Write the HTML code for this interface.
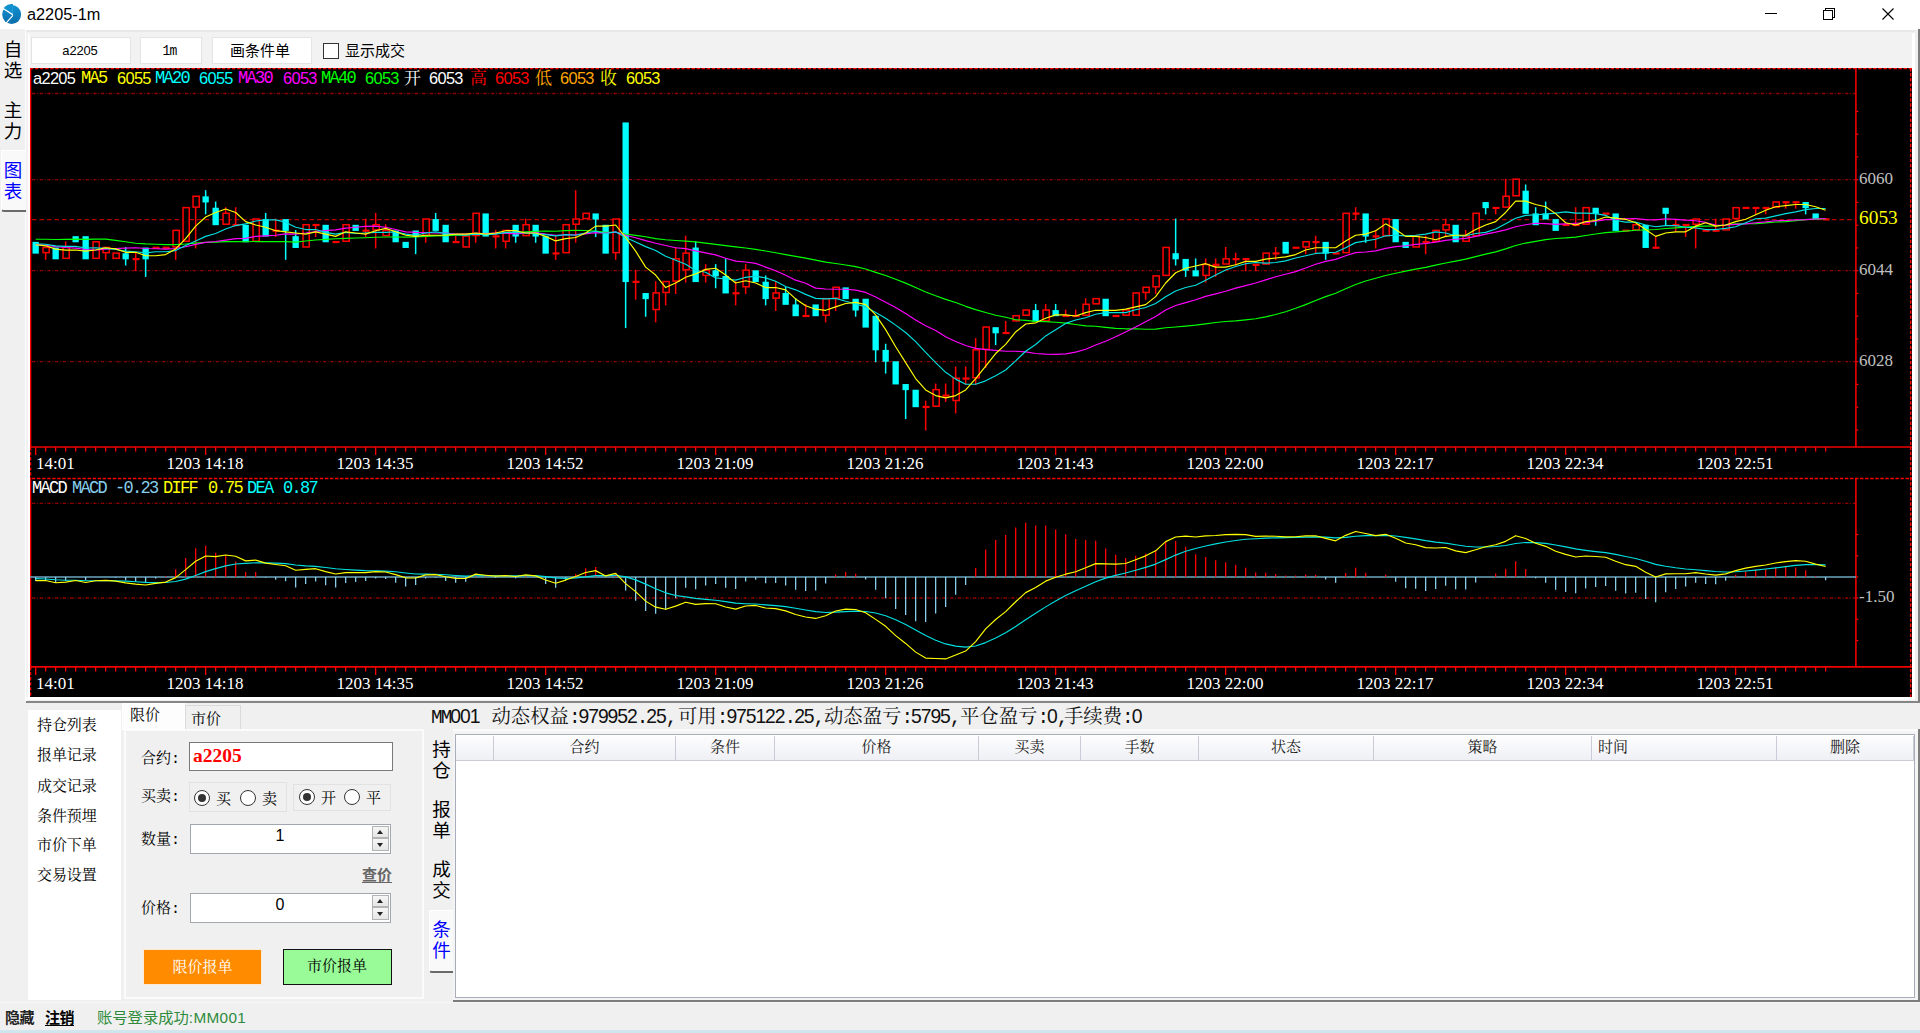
<!DOCTYPE html>
<html lang="zh-CN">
<head>
<meta charset="utf-8">
<title>a2205-1m</title>
<style>
*{box-sizing:border-box;margin:0;padding:0}
html,body{width:1920px;height:1033px;overflow:hidden;background:#f0f0f0}
body{position:relative;font-family:"Liberation Sans","Noto Sans CJK SC",sans-serif;font-size:15px;color:#000}
.abs{position:absolute}
.song{font-family:"Liberation Mono","Noto Serif CJK SC",serif}
.cj{font-family:"Liberation Sans","Noto Sans CJK SC",sans-serif}
/* title bar */
#title{left:0;top:0;width:1920px;height:30px;background:#fff}
#title .t{left:27px;top:4.2px;font-size:16.3px;line-height:20px;color:#000;letter-spacing:0}
/* frame */
#frameline{left:26.3px;top:29.9px;width:1894px;height:2.5px;background:#e8e8e8}
#panel{left:26.3px;top:32.4px;width:1886px;height:666px;background:#f2f2f2}
#lstrip{left:27.6px;top:34px;width:2.7px;height:665px;background:#fdfdfd}
#sbtop{left:0;top:28.9px;width:25px;height:2px;background:#f0f0f0}
#pwhite{left:1912px;top:33px;width:3px;height:667px;background:#fff}
#plight{left:1915px;top:30px;width:3px;height:671px;background:#efefef}
#pwhiteb{left:26px;top:697px;width:1889px;height:3px;background:linear-gradient(#fff 0,#fff 80%,#f0f0f0)}
#pshadow{left:26px;top:700.5px;width:1894px;height:2px;background:#868686}
#rborder{left:1917.6px;top:29px;width:2.4px;height:673px;background:#7d7d7d}
#rborder2{left:1917.6px;top:729px;width:2.4px;height:273px;background:#7d7d7d}
/* left vertical tabs */
.vtab{left:0;width:26px;height:60px;text-align:center;font-size:18.5px;line-height:21.4px;color:#000}
.vtab.sel{color:#0000ff}
#vsel{left:1px;top:150px;width:25px;height:62px;background:#f9f9f9;border-left:1px solid #fff;border-top:1px solid #fff;border-bottom:2px solid #6a6a6a;border-radius:0 0 0 3px}
/* toolbar */
.tbtn{top:36.6px;height:27.4px;background:#fff;border:1px solid #e4e4e4;text-align:center;line-height:25px}
/* chart text */
.lg{top:68.7px;font-size:17px;line-height:20px;white-space:pre;letter-spacing:-1.7px;font-family:"Liberation Mono","Noto Serif CJK SC",monospace}
.lgc{letter-spacing:0;margin-top:1.5px}
.lgm{transform:scaleY(1.1);transform-origin:0 14.6px}
.lgd{font-family:"Liberation Sans",sans-serif;font-size:16.4px;letter-spacing:-.67px;margin-top:-1.2px}
.tm{font-family:"Liberation Serif",serif;font-size:17px;line-height:20px;color:#fff;white-space:pre;text-align:center;width:120px}
.pl{font-family:"Liberation Serif",serif;font-size:17px;line-height:20px;color:#c0c0c0;left:1859px}
/* bottom-left list */
#list{left:28px;top:710px;width:93px;height:290px;background:#fff}
#list div{position:absolute;left:9px;font-size:15px;line-height:20px;letter-spacing:-.1px}
/* tab control */
#tabsel{left:122px;top:703px;width:63px;height:27px;background:#fdfdfd;border:1px solid #fff}
#tabun{left:185px;top:705.2px;width:56px;height:23.4px;background:#f0f0f0;border:1px solid #dadada;border-bottom:none}
#pane{left:124px;top:729px;width:300px;height:270px;background:#f0f0f0;border:2px solid #fbfbfb}
.lab{font-size:15px;line-height:20px}
.inp{background:#fff;border:1px solid #7a7a7a}
.gb{border:1px solid #e2e2e2;background:#f0f0f0}
.radio{width:16px;height:16px;border-radius:50%;border:1px solid #333;background:#fff}
.radio.on::after{content:"";position:absolute;left:3px;top:3px;width:8px;height:8px;border-radius:50%;background:#333}
.spin{width:17px;height:12.2px;background:linear-gradient(#f6f6f6,#e6e6e6);border:1px solid #b4b4b4}
.spin i{position:absolute;left:4px;width:0;height:0;border-left:3.5px solid transparent;border-right:3.5px solid transparent}
.spin.up i{top:2.6px;border-bottom:4px solid #222}
.spin.dn i{top:3.2px;border-top:4px solid #222}
/* right panel */
.acct{top:704.2px;font-size:19.35px;line-height:24px;white-space:pre;font-family:"Liberation Mono","Noto Serif CJK SC",monospace;color:#111}
.acct b{font-weight:normal;letter-spacing:-1.93px}
.acct u{text-decoration:none;font-family:"Liberation Sans",sans-serif;letter-spacing:-1.08px}
.vt2{left:429px;width:25px;text-align:center;font-size:18.5px;line-height:21.4px;color:#000}
#vsel2{left:429px;top:910px;width:25px;height:63px;background:#f9f9f9;border-left:1px solid #fff;border-top:1px solid #fff;border-bottom:2px solid #6a6a6a;border-radius:0 0 0 3px}
#table{left:455px;top:734px;width:1460px;height:263.5px;background:#fff;border:1.3px solid #a9adb9}
#tsh-b{left:453px;top:1000px;width:1467px;height:2.4px;background:#7d7d7d}
#tfr-t{left:453px;top:729px;width:1465px;height:1.5px;background:#fbfbfb}
#tfr-in{left:453px;top:730.5px;width:1464.6px;height:269.5px;background:#f4f4f4}

.th{top:1px;height:25px;border-right:1px solid #c9ccd6;border-bottom:1px solid #c9ccd6;background:linear-gradient(#fdfdfe,#eff0f5);text-align:center;font-size:15px;line-height:25px;color:#1a1a1a}
/* status */
#status{left:0;top:1002px;width:1920px;height:28px;background:#f0f0f0;border-top:1px solid #f7f7f7}
#strip{left:0;top:1030px;width:1920px;height:3px;background:#cfe6ee}
</style>
</head>
<body>
<!-- title bar -->
<div id="title" class="abs">
  <svg class="abs" style="left:0;top:0" width="26" height="30" viewBox="0 0 26 30">
    <defs><linearGradient id="lg1" x1="0" y1="0" x2="0" y2="1"><stop offset="0" stop-color="#1292d2"/><stop offset="1" stop-color="#0b6dab"/></linearGradient>
    <clipPath id="cw"><path d="M12.9 14.1 L1.5 6.65 L1.5 0 L12.95 0Z"/></clipPath></defs>
    <circle cx="11.65" cy="14.55" r="9.45" fill="url(#lg1)"/>
    <path d="M12.8 15.5 L2.1 8.5 L1 8.2 L1 2 L12.95 2 L12.95 15.5Z" fill="#fff"/>
    <circle cx="11.45" cy="13.35" r="9.45" fill="#1190cf" clip-path="url(#cw)"/>
    <path d="M12.9 15.4 L6.3 22.8" stroke="#fff" stroke-width="1.15"/>
  </svg>
  <div class="abs t">a2205-1m</div>
  <svg class="abs" style="left:1750px;top:0" width="170" height="30" viewBox="0 0 170 30" shape-rendering="crispEdges">
    <rect x="15" y="13" width="12" height="1" fill="#000"/>
    <g fill="none" stroke="#000" stroke-width="1">
      <rect x="73.5" y="10.5" width="9" height="9"/>
      <path d="M75.5 10.5 V8.5 H84.5 V17.5 H82.5"/>
    </g>
    <g stroke="#000" stroke-width="1.1" shape-rendering="auto"><path d="M132.5 8.5 L143.5 19.5 M143.5 8.5 L132.5 19.5"/></g>
  </svg>
</div>
<div id="frameline" class="abs"></div>
<div id="panel" class="abs"></div>
<div id="lstrip" class="abs"></div>
<div id="sbtop" class="abs"></div>
<div id="pwhite" class="abs"></div>
<div class="abs" style="left:24.6px;top:29px;width:1.5px;height:121px;background:#fcfcfc"></div>
<div class="abs" style="left:24.6px;top:213px;width:1.5px;height:488px;background:#fcfcfc"></div>
<div id="pwhiteb" class="abs"></div>
<div id="pshadow" class="abs"></div>
<div id="plight" class="abs"></div>
<div id="rborder" class="abs"></div>

<!-- left vertical tabs -->
<div id="vsel" class="abs"></div>
<div class="abs vtab cj" style="top:39px">自<br>选</div>
<div class="abs vtab cj" style="top:100px">主<br>力</div>
<div class="abs vtab cj sel" style="top:160px">图<br>表</div>

<!-- toolbar -->
<div class="abs tbtn" style="left:31px;width:100px;font-size:13px;letter-spacing:-.15px;padding-right:2px;font-family:'Liberation Sans',sans-serif">a2205</div>
<div class="abs tbtn song" style="left:140px;width:62px;font-size:13px;letter-spacing:-.9px;padding-right:3px"><span style="display:inline-block;transform:scaleY(1.15)">1m</span></div>
<div class="abs tbtn cj" style="left:212px;width:100px;font-size:15px;padding-right:4px">画条件单</div>
<div class="abs" style="left:323px;top:43px;width:16px;height:16px;border:1px solid #333;background:#fff"></div>
<div class="abs cj" style="left:345px;top:40px;font-size:15px;line-height:22px">显示成交</div>

<!-- chart -->
<div class="abs" style="left:30px;top:68px;width:1882px;height:629px;background:#000">
<svg id="chart" width="1882" height="629" viewBox="30 68 1882 629">
<rect x="30" y="68" width="1882" height="629" fill="#000"/>
<line x1="32" x2="1855" y1="93.5" y2="93.5" stroke="#8e0000" stroke-width="1.3" stroke-dasharray="3.4 1.7 0.85 1.7"/>
<line x1="32" x2="1855" y1="179.7" y2="179.7" stroke="#8e0000" stroke-width="1.3" stroke-dasharray="3.4 1.7 0.85 1.7"/>
<line x1="32" x2="1855" y1="270.7" y2="270.7" stroke="#8e0000" stroke-width="1.3" stroke-dasharray="3.4 1.7 0.85 1.7"/>
<line x1="32" x2="1855" y1="361.7" y2="361.7" stroke="#8e0000" stroke-width="1.3" stroke-dasharray="3.4 1.7 0.85 1.7"/>
<line x1="32" x2="1855" y1="219.6" y2="219.6" stroke="#b40000" stroke-width="1.3" stroke-dasharray="4.6 2.9"/>
<line x1="32" x2="1855" y1="503.3" y2="503.3" stroke="#8e0000" stroke-width="1.3" stroke-dasharray="3.4 1.7 0.85 1.7"/>
<line x1="32" x2="1855" y1="598" y2="598" stroke="#8e0000" stroke-width="1.3" stroke-dasharray="3.4 1.7 0.85 1.7"/>
<line x1="30" x2="1912" y1="68.5" y2="68.5" stroke="#ff0000" stroke-width="1.5" stroke-dasharray="3.4 1.65"/>
<line x1="32" x2="1912" y1="478.4" y2="478.4" stroke="#ff0000" stroke-width="1.5" stroke-dasharray="3.4 1.65"/>
<line x1="1910.7" x2="1910.7" y1="68" y2="697" stroke="#ff0000" stroke-width="1.5" stroke-dasharray="3.4 1.65"/>
<line x1="30.6" x2="30.6" y1="68" y2="447" stroke="#ff0000" stroke-width="1.4"/>
<line x1="30.6" x2="30.6" y1="447" y2="478" stroke="#ff0000" stroke-width="1.4" stroke-dasharray="3.4 1.65"/>
<line x1="30.6" x2="30.6" y1="478" y2="667" stroke="#ff0000" stroke-width="1.4"/>
<line x1="30.6" x2="30.6" y1="667" y2="697" stroke="#ff0000" stroke-width="1.4" stroke-dasharray="3.4 1.65"/>
<line x1="30" x2="1912" y1="447" y2="447" stroke="#f00000" stroke-width="1.7"/>
<line x1="30" x2="1912" y1="666.9" y2="666.9" stroke="#f00000" stroke-width="1.7"/>
<line x1="1855.9" x2="1855.9" y1="68" y2="447" stroke="#ff0000" stroke-width="1.5"/>
<line x1="1855.9" x2="1855.9" y1="478" y2="667" stroke="#ff0000" stroke-width="1.5"/>
<line x1="1856.3" x2="1858.3" y1="111.4" y2="111.4" stroke="#ff0000" stroke-width="1.2"/>
<line x1="1856.3" x2="1858.3" y1="134.2" y2="134.2" stroke="#ff0000" stroke-width="1.2"/>
<line x1="1856.3" x2="1858.3" y1="156.9" y2="156.9" stroke="#ff0000" stroke-width="1.2"/>
<line x1="1856.3" x2="1858.3" y1="179.7" y2="179.7" stroke="#ff0000" stroke-width="1.2"/>
<line x1="1856.3" x2="1858.3" y1="202.4" y2="202.4" stroke="#ff0000" stroke-width="1.2"/>
<line x1="1856.3" x2="1858.3" y1="225.2" y2="225.2" stroke="#ff0000" stroke-width="1.2"/>
<line x1="1856.3" x2="1858.3" y1="247.9" y2="247.9" stroke="#ff0000" stroke-width="1.2"/>
<line x1="1856.3" x2="1858.3" y1="270.7" y2="270.7" stroke="#ff0000" stroke-width="1.2"/>
<line x1="1856.3" x2="1858.3" y1="293.4" y2="293.4" stroke="#ff0000" stroke-width="1.2"/>
<line x1="1856.3" x2="1858.3" y1="316.2" y2="316.2" stroke="#ff0000" stroke-width="1.2"/>
<line x1="1856.3" x2="1858.3" y1="338.9" y2="338.9" stroke="#ff0000" stroke-width="1.2"/>
<line x1="1856.3" x2="1858.3" y1="361.7" y2="361.7" stroke="#ff0000" stroke-width="1.2"/>
<line x1="1856.3" x2="1858.3" y1="384.4" y2="384.4" stroke="#ff0000" stroke-width="1.2"/>
<line x1="1856.3" x2="1858.3" y1="407.2" y2="407.2" stroke="#ff0000" stroke-width="1.2"/>
<line x1="1856.3" x2="1858.3" y1="429.9" y2="429.9" stroke="#ff0000" stroke-width="1.2"/>
<line x1="1856.3" x2="1858.3" y1="534.5" y2="534.5" stroke="#ff0000" stroke-width="1.2"/>
<line x1="1856.3" x2="1858.3" y1="555.8" y2="555.8" stroke="#ff0000" stroke-width="1.2"/>
<line x1="1856.3" x2="1858.3" y1="577" y2="577" stroke="#ff0000" stroke-width="1.2"/>
<line x1="1856.3" x2="1858.3" y1="598" y2="598" stroke="#ff0000" stroke-width="1.2"/>
<line x1="1856.3" x2="1858.3" y1="619.3" y2="619.3" stroke="#ff0000" stroke-width="1.2"/>
<line x1="1856.3" x2="1858.3" y1="640.6" y2="640.6" stroke="#ff0000" stroke-width="1.2"/>
<line x1="35.65" x2="35.65" y1="447" y2="455" stroke="#ff0000" stroke-width="1.3"/>
<line x1="45.65" x2="45.65" y1="447" y2="451.6" stroke="#ff0000" stroke-width="1.3"/>
<line x1="55.65" x2="55.65" y1="447" y2="451.6" stroke="#ff0000" stroke-width="1.3"/>
<line x1="65.65" x2="65.65" y1="447" y2="451.6" stroke="#ff0000" stroke-width="1.3"/>
<line x1="75.65" x2="75.65" y1="447" y2="451.6" stroke="#ff0000" stroke-width="1.3"/>
<line x1="85.65" x2="85.65" y1="447" y2="451.6" stroke="#ff0000" stroke-width="1.3"/>
<line x1="95.65" x2="95.65" y1="447" y2="451.6" stroke="#ff0000" stroke-width="1.3"/>
<line x1="105.65" x2="105.65" y1="447" y2="451.6" stroke="#ff0000" stroke-width="1.3"/>
<line x1="115.65" x2="115.65" y1="447" y2="451.6" stroke="#ff0000" stroke-width="1.3"/>
<line x1="125.65" x2="125.65" y1="447" y2="451.6" stroke="#ff0000" stroke-width="1.3"/>
<line x1="135.65" x2="135.65" y1="447" y2="451.6" stroke="#ff0000" stroke-width="1.3"/>
<line x1="145.65" x2="145.65" y1="447" y2="451.6" stroke="#ff0000" stroke-width="1.3"/>
<line x1="155.65" x2="155.65" y1="447" y2="451.6" stroke="#ff0000" stroke-width="1.3"/>
<line x1="165.65" x2="165.65" y1="447" y2="451.6" stroke="#ff0000" stroke-width="1.3"/>
<line x1="175.65" x2="175.65" y1="447" y2="451.6" stroke="#ff0000" stroke-width="1.3"/>
<line x1="185.65" x2="185.65" y1="447" y2="451.6" stroke="#ff0000" stroke-width="1.3"/>
<line x1="195.65" x2="195.65" y1="447" y2="451.6" stroke="#ff0000" stroke-width="1.3"/>
<line x1="205.65" x2="205.65" y1="447" y2="455" stroke="#ff0000" stroke-width="1.3"/>
<line x1="215.65" x2="215.65" y1="447" y2="451.6" stroke="#ff0000" stroke-width="1.3"/>
<line x1="225.65" x2="225.65" y1="447" y2="451.6" stroke="#ff0000" stroke-width="1.3"/>
<line x1="235.65" x2="235.65" y1="447" y2="451.6" stroke="#ff0000" stroke-width="1.3"/>
<line x1="245.65" x2="245.65" y1="447" y2="451.6" stroke="#ff0000" stroke-width="1.3"/>
<line x1="255.65" x2="255.65" y1="447" y2="451.6" stroke="#ff0000" stroke-width="1.3"/>
<line x1="265.65" x2="265.65" y1="447" y2="451.6" stroke="#ff0000" stroke-width="1.3"/>
<line x1="275.65" x2="275.65" y1="447" y2="451.6" stroke="#ff0000" stroke-width="1.3"/>
<line x1="285.65" x2="285.65" y1="447" y2="451.6" stroke="#ff0000" stroke-width="1.3"/>
<line x1="295.65" x2="295.65" y1="447" y2="451.6" stroke="#ff0000" stroke-width="1.3"/>
<line x1="305.65" x2="305.65" y1="447" y2="451.6" stroke="#ff0000" stroke-width="1.3"/>
<line x1="315.65" x2="315.65" y1="447" y2="451.6" stroke="#ff0000" stroke-width="1.3"/>
<line x1="325.65" x2="325.65" y1="447" y2="451.6" stroke="#ff0000" stroke-width="1.3"/>
<line x1="335.65" x2="335.65" y1="447" y2="451.6" stroke="#ff0000" stroke-width="1.3"/>
<line x1="345.65" x2="345.65" y1="447" y2="451.6" stroke="#ff0000" stroke-width="1.3"/>
<line x1="355.65" x2="355.65" y1="447" y2="451.6" stroke="#ff0000" stroke-width="1.3"/>
<line x1="365.65" x2="365.65" y1="447" y2="451.6" stroke="#ff0000" stroke-width="1.3"/>
<line x1="375.65" x2="375.65" y1="447" y2="455" stroke="#ff0000" stroke-width="1.3"/>
<line x1="385.65" x2="385.65" y1="447" y2="451.6" stroke="#ff0000" stroke-width="1.3"/>
<line x1="395.65" x2="395.65" y1="447" y2="451.6" stroke="#ff0000" stroke-width="1.3"/>
<line x1="405.65" x2="405.65" y1="447" y2="451.6" stroke="#ff0000" stroke-width="1.3"/>
<line x1="415.65" x2="415.65" y1="447" y2="451.6" stroke="#ff0000" stroke-width="1.3"/>
<line x1="425.65" x2="425.65" y1="447" y2="451.6" stroke="#ff0000" stroke-width="1.3"/>
<line x1="435.65" x2="435.65" y1="447" y2="451.6" stroke="#ff0000" stroke-width="1.3"/>
<line x1="445.65" x2="445.65" y1="447" y2="451.6" stroke="#ff0000" stroke-width="1.3"/>
<line x1="455.65" x2="455.65" y1="447" y2="451.6" stroke="#ff0000" stroke-width="1.3"/>
<line x1="465.65" x2="465.65" y1="447" y2="451.6" stroke="#ff0000" stroke-width="1.3"/>
<line x1="475.65" x2="475.65" y1="447" y2="451.6" stroke="#ff0000" stroke-width="1.3"/>
<line x1="485.65" x2="485.65" y1="447" y2="451.6" stroke="#ff0000" stroke-width="1.3"/>
<line x1="495.65" x2="495.65" y1="447" y2="451.6" stroke="#ff0000" stroke-width="1.3"/>
<line x1="505.65" x2="505.65" y1="447" y2="451.6" stroke="#ff0000" stroke-width="1.3"/>
<line x1="515.65" x2="515.65" y1="447" y2="451.6" stroke="#ff0000" stroke-width="1.3"/>
<line x1="525.65" x2="525.65" y1="447" y2="451.6" stroke="#ff0000" stroke-width="1.3"/>
<line x1="535.65" x2="535.65" y1="447" y2="451.6" stroke="#ff0000" stroke-width="1.3"/>
<line x1="545.65" x2="545.65" y1="447" y2="455" stroke="#ff0000" stroke-width="1.3"/>
<line x1="555.65" x2="555.65" y1="447" y2="451.6" stroke="#ff0000" stroke-width="1.3"/>
<line x1="565.65" x2="565.65" y1="447" y2="451.6" stroke="#ff0000" stroke-width="1.3"/>
<line x1="575.65" x2="575.65" y1="447" y2="451.6" stroke="#ff0000" stroke-width="1.3"/>
<line x1="585.65" x2="585.65" y1="447" y2="451.6" stroke="#ff0000" stroke-width="1.3"/>
<line x1="595.65" x2="595.65" y1="447" y2="451.6" stroke="#ff0000" stroke-width="1.3"/>
<line x1="605.65" x2="605.65" y1="447" y2="451.6" stroke="#ff0000" stroke-width="1.3"/>
<line x1="615.65" x2="615.65" y1="447" y2="451.6" stroke="#ff0000" stroke-width="1.3"/>
<line x1="625.65" x2="625.65" y1="447" y2="451.6" stroke="#ff0000" stroke-width="1.3"/>
<line x1="635.65" x2="635.65" y1="447" y2="451.6" stroke="#ff0000" stroke-width="1.3"/>
<line x1="645.65" x2="645.65" y1="447" y2="451.6" stroke="#ff0000" stroke-width="1.3"/>
<line x1="655.65" x2="655.65" y1="447" y2="451.6" stroke="#ff0000" stroke-width="1.3"/>
<line x1="665.65" x2="665.65" y1="447" y2="451.6" stroke="#ff0000" stroke-width="1.3"/>
<line x1="675.65" x2="675.65" y1="447" y2="451.6" stroke="#ff0000" stroke-width="1.3"/>
<line x1="685.65" x2="685.65" y1="447" y2="451.6" stroke="#ff0000" stroke-width="1.3"/>
<line x1="695.65" x2="695.65" y1="447" y2="451.6" stroke="#ff0000" stroke-width="1.3"/>
<line x1="705.65" x2="705.65" y1="447" y2="451.6" stroke="#ff0000" stroke-width="1.3"/>
<line x1="715.65" x2="715.65" y1="447" y2="455" stroke="#ff0000" stroke-width="1.3"/>
<line x1="725.65" x2="725.65" y1="447" y2="451.6" stroke="#ff0000" stroke-width="1.3"/>
<line x1="735.65" x2="735.65" y1="447" y2="451.6" stroke="#ff0000" stroke-width="1.3"/>
<line x1="745.65" x2="745.65" y1="447" y2="451.6" stroke="#ff0000" stroke-width="1.3"/>
<line x1="755.65" x2="755.65" y1="447" y2="451.6" stroke="#ff0000" stroke-width="1.3"/>
<line x1="765.65" x2="765.65" y1="447" y2="451.6" stroke="#ff0000" stroke-width="1.3"/>
<line x1="775.65" x2="775.65" y1="447" y2="451.6" stroke="#ff0000" stroke-width="1.3"/>
<line x1="785.65" x2="785.65" y1="447" y2="451.6" stroke="#ff0000" stroke-width="1.3"/>
<line x1="795.65" x2="795.65" y1="447" y2="451.6" stroke="#ff0000" stroke-width="1.3"/>
<line x1="805.65" x2="805.65" y1="447" y2="451.6" stroke="#ff0000" stroke-width="1.3"/>
<line x1="815.65" x2="815.65" y1="447" y2="451.6" stroke="#ff0000" stroke-width="1.3"/>
<line x1="825.65" x2="825.65" y1="447" y2="451.6" stroke="#ff0000" stroke-width="1.3"/>
<line x1="835.65" x2="835.65" y1="447" y2="451.6" stroke="#ff0000" stroke-width="1.3"/>
<line x1="845.65" x2="845.65" y1="447" y2="451.6" stroke="#ff0000" stroke-width="1.3"/>
<line x1="855.65" x2="855.65" y1="447" y2="451.6" stroke="#ff0000" stroke-width="1.3"/>
<line x1="865.65" x2="865.65" y1="447" y2="451.6" stroke="#ff0000" stroke-width="1.3"/>
<line x1="875.65" x2="875.65" y1="447" y2="451.6" stroke="#ff0000" stroke-width="1.3"/>
<line x1="885.65" x2="885.65" y1="447" y2="455" stroke="#ff0000" stroke-width="1.3"/>
<line x1="895.65" x2="895.65" y1="447" y2="451.6" stroke="#ff0000" stroke-width="1.3"/>
<line x1="905.65" x2="905.65" y1="447" y2="451.6" stroke="#ff0000" stroke-width="1.3"/>
<line x1="915.65" x2="915.65" y1="447" y2="451.6" stroke="#ff0000" stroke-width="1.3"/>
<line x1="925.65" x2="925.65" y1="447" y2="451.6" stroke="#ff0000" stroke-width="1.3"/>
<line x1="935.65" x2="935.65" y1="447" y2="451.6" stroke="#ff0000" stroke-width="1.3"/>
<line x1="945.65" x2="945.65" y1="447" y2="451.6" stroke="#ff0000" stroke-width="1.3"/>
<line x1="955.65" x2="955.65" y1="447" y2="451.6" stroke="#ff0000" stroke-width="1.3"/>
<line x1="965.65" x2="965.65" y1="447" y2="451.6" stroke="#ff0000" stroke-width="1.3"/>
<line x1="975.65" x2="975.65" y1="447" y2="451.6" stroke="#ff0000" stroke-width="1.3"/>
<line x1="985.65" x2="985.65" y1="447" y2="451.6" stroke="#ff0000" stroke-width="1.3"/>
<line x1="995.65" x2="995.65" y1="447" y2="451.6" stroke="#ff0000" stroke-width="1.3"/>
<line x1="1005.65" x2="1005.65" y1="447" y2="451.6" stroke="#ff0000" stroke-width="1.3"/>
<line x1="1015.65" x2="1015.65" y1="447" y2="451.6" stroke="#ff0000" stroke-width="1.3"/>
<line x1="1025.65" x2="1025.65" y1="447" y2="451.6" stroke="#ff0000" stroke-width="1.3"/>
<line x1="1035.65" x2="1035.65" y1="447" y2="451.6" stroke="#ff0000" stroke-width="1.3"/>
<line x1="1045.65" x2="1045.65" y1="447" y2="451.6" stroke="#ff0000" stroke-width="1.3"/>
<line x1="1055.65" x2="1055.65" y1="447" y2="455" stroke="#ff0000" stroke-width="1.3"/>
<line x1="1065.65" x2="1065.65" y1="447" y2="451.6" stroke="#ff0000" stroke-width="1.3"/>
<line x1="1075.65" x2="1075.65" y1="447" y2="451.6" stroke="#ff0000" stroke-width="1.3"/>
<line x1="1085.65" x2="1085.65" y1="447" y2="451.6" stroke="#ff0000" stroke-width="1.3"/>
<line x1="1095.65" x2="1095.65" y1="447" y2="451.6" stroke="#ff0000" stroke-width="1.3"/>
<line x1="1105.65" x2="1105.65" y1="447" y2="451.6" stroke="#ff0000" stroke-width="1.3"/>
<line x1="1115.65" x2="1115.65" y1="447" y2="451.6" stroke="#ff0000" stroke-width="1.3"/>
<line x1="1125.65" x2="1125.65" y1="447" y2="451.6" stroke="#ff0000" stroke-width="1.3"/>
<line x1="1135.65" x2="1135.65" y1="447" y2="451.6" stroke="#ff0000" stroke-width="1.3"/>
<line x1="1145.65" x2="1145.65" y1="447" y2="451.6" stroke="#ff0000" stroke-width="1.3"/>
<line x1="1155.65" x2="1155.65" y1="447" y2="451.6" stroke="#ff0000" stroke-width="1.3"/>
<line x1="1165.65" x2="1165.65" y1="447" y2="451.6" stroke="#ff0000" stroke-width="1.3"/>
<line x1="1175.65" x2="1175.65" y1="447" y2="451.6" stroke="#ff0000" stroke-width="1.3"/>
<line x1="1185.65" x2="1185.65" y1="447" y2="451.6" stroke="#ff0000" stroke-width="1.3"/>
<line x1="1195.65" x2="1195.65" y1="447" y2="451.6" stroke="#ff0000" stroke-width="1.3"/>
<line x1="1205.65" x2="1205.65" y1="447" y2="451.6" stroke="#ff0000" stroke-width="1.3"/>
<line x1="1215.65" x2="1215.65" y1="447" y2="451.6" stroke="#ff0000" stroke-width="1.3"/>
<line x1="1225.65" x2="1225.65" y1="447" y2="455" stroke="#ff0000" stroke-width="1.3"/>
<line x1="1235.65" x2="1235.65" y1="447" y2="451.6" stroke="#ff0000" stroke-width="1.3"/>
<line x1="1245.65" x2="1245.65" y1="447" y2="451.6" stroke="#ff0000" stroke-width="1.3"/>
<line x1="1255.65" x2="1255.65" y1="447" y2="451.6" stroke="#ff0000" stroke-width="1.3"/>
<line x1="1265.65" x2="1265.65" y1="447" y2="451.6" stroke="#ff0000" stroke-width="1.3"/>
<line x1="1275.65" x2="1275.65" y1="447" y2="451.6" stroke="#ff0000" stroke-width="1.3"/>
<line x1="1285.65" x2="1285.65" y1="447" y2="451.6" stroke="#ff0000" stroke-width="1.3"/>
<line x1="1295.65" x2="1295.65" y1="447" y2="451.6" stroke="#ff0000" stroke-width="1.3"/>
<line x1="1305.65" x2="1305.65" y1="447" y2="451.6" stroke="#ff0000" stroke-width="1.3"/>
<line x1="1315.65" x2="1315.65" y1="447" y2="451.6" stroke="#ff0000" stroke-width="1.3"/>
<line x1="1325.65" x2="1325.65" y1="447" y2="451.6" stroke="#ff0000" stroke-width="1.3"/>
<line x1="1335.65" x2="1335.65" y1="447" y2="451.6" stroke="#ff0000" stroke-width="1.3"/>
<line x1="1345.65" x2="1345.65" y1="447" y2="451.6" stroke="#ff0000" stroke-width="1.3"/>
<line x1="1355.65" x2="1355.65" y1="447" y2="451.6" stroke="#ff0000" stroke-width="1.3"/>
<line x1="1365.65" x2="1365.65" y1="447" y2="451.6" stroke="#ff0000" stroke-width="1.3"/>
<line x1="1375.65" x2="1375.65" y1="447" y2="451.6" stroke="#ff0000" stroke-width="1.3"/>
<line x1="1385.65" x2="1385.65" y1="447" y2="451.6" stroke="#ff0000" stroke-width="1.3"/>
<line x1="1395.65" x2="1395.65" y1="447" y2="455" stroke="#ff0000" stroke-width="1.3"/>
<line x1="1405.65" x2="1405.65" y1="447" y2="451.6" stroke="#ff0000" stroke-width="1.3"/>
<line x1="1415.65" x2="1415.65" y1="447" y2="451.6" stroke="#ff0000" stroke-width="1.3"/>
<line x1="1425.65" x2="1425.65" y1="447" y2="451.6" stroke="#ff0000" stroke-width="1.3"/>
<line x1="1435.65" x2="1435.65" y1="447" y2="451.6" stroke="#ff0000" stroke-width="1.3"/>
<line x1="1445.65" x2="1445.65" y1="447" y2="451.6" stroke="#ff0000" stroke-width="1.3"/>
<line x1="1455.65" x2="1455.65" y1="447" y2="451.6" stroke="#ff0000" stroke-width="1.3"/>
<line x1="1465.65" x2="1465.65" y1="447" y2="451.6" stroke="#ff0000" stroke-width="1.3"/>
<line x1="1475.65" x2="1475.65" y1="447" y2="451.6" stroke="#ff0000" stroke-width="1.3"/>
<line x1="1485.65" x2="1485.65" y1="447" y2="451.6" stroke="#ff0000" stroke-width="1.3"/>
<line x1="1495.65" x2="1495.65" y1="447" y2="451.6" stroke="#ff0000" stroke-width="1.3"/>
<line x1="1505.65" x2="1505.65" y1="447" y2="451.6" stroke="#ff0000" stroke-width="1.3"/>
<line x1="1515.65" x2="1515.65" y1="447" y2="451.6" stroke="#ff0000" stroke-width="1.3"/>
<line x1="1525.65" x2="1525.65" y1="447" y2="451.6" stroke="#ff0000" stroke-width="1.3"/>
<line x1="1535.65" x2="1535.65" y1="447" y2="451.6" stroke="#ff0000" stroke-width="1.3"/>
<line x1="1545.65" x2="1545.65" y1="447" y2="451.6" stroke="#ff0000" stroke-width="1.3"/>
<line x1="1555.65" x2="1555.65" y1="447" y2="451.6" stroke="#ff0000" stroke-width="1.3"/>
<line x1="1565.65" x2="1565.65" y1="447" y2="455" stroke="#ff0000" stroke-width="1.3"/>
<line x1="1575.65" x2="1575.65" y1="447" y2="451.6" stroke="#ff0000" stroke-width="1.3"/>
<line x1="1585.65" x2="1585.65" y1="447" y2="451.6" stroke="#ff0000" stroke-width="1.3"/>
<line x1="1595.65" x2="1595.65" y1="447" y2="451.6" stroke="#ff0000" stroke-width="1.3"/>
<line x1="1605.65" x2="1605.65" y1="447" y2="451.6" stroke="#ff0000" stroke-width="1.3"/>
<line x1="1615.65" x2="1615.65" y1="447" y2="451.6" stroke="#ff0000" stroke-width="1.3"/>
<line x1="1625.65" x2="1625.65" y1="447" y2="451.6" stroke="#ff0000" stroke-width="1.3"/>
<line x1="1635.65" x2="1635.65" y1="447" y2="451.6" stroke="#ff0000" stroke-width="1.3"/>
<line x1="1645.65" x2="1645.65" y1="447" y2="451.6" stroke="#ff0000" stroke-width="1.3"/>
<line x1="1655.65" x2="1655.65" y1="447" y2="451.6" stroke="#ff0000" stroke-width="1.3"/>
<line x1="1665.65" x2="1665.65" y1="447" y2="451.6" stroke="#ff0000" stroke-width="1.3"/>
<line x1="1675.65" x2="1675.65" y1="447" y2="451.6" stroke="#ff0000" stroke-width="1.3"/>
<line x1="1685.65" x2="1685.65" y1="447" y2="451.6" stroke="#ff0000" stroke-width="1.3"/>
<line x1="1695.65" x2="1695.65" y1="447" y2="451.6" stroke="#ff0000" stroke-width="1.3"/>
<line x1="1705.65" x2="1705.65" y1="447" y2="451.6" stroke="#ff0000" stroke-width="1.3"/>
<line x1="1715.65" x2="1715.65" y1="447" y2="451.6" stroke="#ff0000" stroke-width="1.3"/>
<line x1="1725.65" x2="1725.65" y1="447" y2="451.6" stroke="#ff0000" stroke-width="1.3"/>
<line x1="1735.65" x2="1735.65" y1="447" y2="455" stroke="#ff0000" stroke-width="1.3"/>
<line x1="1745.65" x2="1745.65" y1="447" y2="451.6" stroke="#ff0000" stroke-width="1.3"/>
<line x1="1755.65" x2="1755.65" y1="447" y2="451.6" stroke="#ff0000" stroke-width="1.3"/>
<line x1="1765.65" x2="1765.65" y1="447" y2="451.6" stroke="#ff0000" stroke-width="1.3"/>
<line x1="1775.65" x2="1775.65" y1="447" y2="451.6" stroke="#ff0000" stroke-width="1.3"/>
<line x1="1785.65" x2="1785.65" y1="447" y2="451.6" stroke="#ff0000" stroke-width="1.3"/>
<line x1="1795.65" x2="1795.65" y1="447" y2="451.6" stroke="#ff0000" stroke-width="1.3"/>
<line x1="1805.65" x2="1805.65" y1="447" y2="451.6" stroke="#ff0000" stroke-width="1.3"/>
<line x1="1815.65" x2="1815.65" y1="447" y2="451.6" stroke="#ff0000" stroke-width="1.3"/>
<line x1="1825.65" x2="1825.65" y1="447" y2="451.6" stroke="#ff0000" stroke-width="1.3"/>
<line x1="35.65" x2="35.65" y1="667" y2="675" stroke="#ff0000" stroke-width="1.3"/>
<line x1="45.65" x2="45.65" y1="667" y2="671.6" stroke="#ff0000" stroke-width="1.3"/>
<line x1="55.65" x2="55.65" y1="667" y2="671.6" stroke="#ff0000" stroke-width="1.3"/>
<line x1="65.65" x2="65.65" y1="667" y2="671.6" stroke="#ff0000" stroke-width="1.3"/>
<line x1="75.65" x2="75.65" y1="667" y2="671.6" stroke="#ff0000" stroke-width="1.3"/>
<line x1="85.65" x2="85.65" y1="667" y2="671.6" stroke="#ff0000" stroke-width="1.3"/>
<line x1="95.65" x2="95.65" y1="667" y2="671.6" stroke="#ff0000" stroke-width="1.3"/>
<line x1="105.65" x2="105.65" y1="667" y2="671.6" stroke="#ff0000" stroke-width="1.3"/>
<line x1="115.65" x2="115.65" y1="667" y2="671.6" stroke="#ff0000" stroke-width="1.3"/>
<line x1="125.65" x2="125.65" y1="667" y2="671.6" stroke="#ff0000" stroke-width="1.3"/>
<line x1="135.65" x2="135.65" y1="667" y2="671.6" stroke="#ff0000" stroke-width="1.3"/>
<line x1="145.65" x2="145.65" y1="667" y2="671.6" stroke="#ff0000" stroke-width="1.3"/>
<line x1="155.65" x2="155.65" y1="667" y2="671.6" stroke="#ff0000" stroke-width="1.3"/>
<line x1="165.65" x2="165.65" y1="667" y2="671.6" stroke="#ff0000" stroke-width="1.3"/>
<line x1="175.65" x2="175.65" y1="667" y2="671.6" stroke="#ff0000" stroke-width="1.3"/>
<line x1="185.65" x2="185.65" y1="667" y2="671.6" stroke="#ff0000" stroke-width="1.3"/>
<line x1="195.65" x2="195.65" y1="667" y2="671.6" stroke="#ff0000" stroke-width="1.3"/>
<line x1="205.65" x2="205.65" y1="667" y2="675" stroke="#ff0000" stroke-width="1.3"/>
<line x1="215.65" x2="215.65" y1="667" y2="671.6" stroke="#ff0000" stroke-width="1.3"/>
<line x1="225.65" x2="225.65" y1="667" y2="671.6" stroke="#ff0000" stroke-width="1.3"/>
<line x1="235.65" x2="235.65" y1="667" y2="671.6" stroke="#ff0000" stroke-width="1.3"/>
<line x1="245.65" x2="245.65" y1="667" y2="671.6" stroke="#ff0000" stroke-width="1.3"/>
<line x1="255.65" x2="255.65" y1="667" y2="671.6" stroke="#ff0000" stroke-width="1.3"/>
<line x1="265.65" x2="265.65" y1="667" y2="671.6" stroke="#ff0000" stroke-width="1.3"/>
<line x1="275.65" x2="275.65" y1="667" y2="671.6" stroke="#ff0000" stroke-width="1.3"/>
<line x1="285.65" x2="285.65" y1="667" y2="671.6" stroke="#ff0000" stroke-width="1.3"/>
<line x1="295.65" x2="295.65" y1="667" y2="671.6" stroke="#ff0000" stroke-width="1.3"/>
<line x1="305.65" x2="305.65" y1="667" y2="671.6" stroke="#ff0000" stroke-width="1.3"/>
<line x1="315.65" x2="315.65" y1="667" y2="671.6" stroke="#ff0000" stroke-width="1.3"/>
<line x1="325.65" x2="325.65" y1="667" y2="671.6" stroke="#ff0000" stroke-width="1.3"/>
<line x1="335.65" x2="335.65" y1="667" y2="671.6" stroke="#ff0000" stroke-width="1.3"/>
<line x1="345.65" x2="345.65" y1="667" y2="671.6" stroke="#ff0000" stroke-width="1.3"/>
<line x1="355.65" x2="355.65" y1="667" y2="671.6" stroke="#ff0000" stroke-width="1.3"/>
<line x1="365.65" x2="365.65" y1="667" y2="671.6" stroke="#ff0000" stroke-width="1.3"/>
<line x1="375.65" x2="375.65" y1="667" y2="675" stroke="#ff0000" stroke-width="1.3"/>
<line x1="385.65" x2="385.65" y1="667" y2="671.6" stroke="#ff0000" stroke-width="1.3"/>
<line x1="395.65" x2="395.65" y1="667" y2="671.6" stroke="#ff0000" stroke-width="1.3"/>
<line x1="405.65" x2="405.65" y1="667" y2="671.6" stroke="#ff0000" stroke-width="1.3"/>
<line x1="415.65" x2="415.65" y1="667" y2="671.6" stroke="#ff0000" stroke-width="1.3"/>
<line x1="425.65" x2="425.65" y1="667" y2="671.6" stroke="#ff0000" stroke-width="1.3"/>
<line x1="435.65" x2="435.65" y1="667" y2="671.6" stroke="#ff0000" stroke-width="1.3"/>
<line x1="445.65" x2="445.65" y1="667" y2="671.6" stroke="#ff0000" stroke-width="1.3"/>
<line x1="455.65" x2="455.65" y1="667" y2="671.6" stroke="#ff0000" stroke-width="1.3"/>
<line x1="465.65" x2="465.65" y1="667" y2="671.6" stroke="#ff0000" stroke-width="1.3"/>
<line x1="475.65" x2="475.65" y1="667" y2="671.6" stroke="#ff0000" stroke-width="1.3"/>
<line x1="485.65" x2="485.65" y1="667" y2="671.6" stroke="#ff0000" stroke-width="1.3"/>
<line x1="495.65" x2="495.65" y1="667" y2="671.6" stroke="#ff0000" stroke-width="1.3"/>
<line x1="505.65" x2="505.65" y1="667" y2="671.6" stroke="#ff0000" stroke-width="1.3"/>
<line x1="515.65" x2="515.65" y1="667" y2="671.6" stroke="#ff0000" stroke-width="1.3"/>
<line x1="525.65" x2="525.65" y1="667" y2="671.6" stroke="#ff0000" stroke-width="1.3"/>
<line x1="535.65" x2="535.65" y1="667" y2="671.6" stroke="#ff0000" stroke-width="1.3"/>
<line x1="545.65" x2="545.65" y1="667" y2="675" stroke="#ff0000" stroke-width="1.3"/>
<line x1="555.65" x2="555.65" y1="667" y2="671.6" stroke="#ff0000" stroke-width="1.3"/>
<line x1="565.65" x2="565.65" y1="667" y2="671.6" stroke="#ff0000" stroke-width="1.3"/>
<line x1="575.65" x2="575.65" y1="667" y2="671.6" stroke="#ff0000" stroke-width="1.3"/>
<line x1="585.65" x2="585.65" y1="667" y2="671.6" stroke="#ff0000" stroke-width="1.3"/>
<line x1="595.65" x2="595.65" y1="667" y2="671.6" stroke="#ff0000" stroke-width="1.3"/>
<line x1="605.65" x2="605.65" y1="667" y2="671.6" stroke="#ff0000" stroke-width="1.3"/>
<line x1="615.65" x2="615.65" y1="667" y2="671.6" stroke="#ff0000" stroke-width="1.3"/>
<line x1="625.65" x2="625.65" y1="667" y2="671.6" stroke="#ff0000" stroke-width="1.3"/>
<line x1="635.65" x2="635.65" y1="667" y2="671.6" stroke="#ff0000" stroke-width="1.3"/>
<line x1="645.65" x2="645.65" y1="667" y2="671.6" stroke="#ff0000" stroke-width="1.3"/>
<line x1="655.65" x2="655.65" y1="667" y2="671.6" stroke="#ff0000" stroke-width="1.3"/>
<line x1="665.65" x2="665.65" y1="667" y2="671.6" stroke="#ff0000" stroke-width="1.3"/>
<line x1="675.65" x2="675.65" y1="667" y2="671.6" stroke="#ff0000" stroke-width="1.3"/>
<line x1="685.65" x2="685.65" y1="667" y2="671.6" stroke="#ff0000" stroke-width="1.3"/>
<line x1="695.65" x2="695.65" y1="667" y2="671.6" stroke="#ff0000" stroke-width="1.3"/>
<line x1="705.65" x2="705.65" y1="667" y2="671.6" stroke="#ff0000" stroke-width="1.3"/>
<line x1="715.65" x2="715.65" y1="667" y2="675" stroke="#ff0000" stroke-width="1.3"/>
<line x1="725.65" x2="725.65" y1="667" y2="671.6" stroke="#ff0000" stroke-width="1.3"/>
<line x1="735.65" x2="735.65" y1="667" y2="671.6" stroke="#ff0000" stroke-width="1.3"/>
<line x1="745.65" x2="745.65" y1="667" y2="671.6" stroke="#ff0000" stroke-width="1.3"/>
<line x1="755.65" x2="755.65" y1="667" y2="671.6" stroke="#ff0000" stroke-width="1.3"/>
<line x1="765.65" x2="765.65" y1="667" y2="671.6" stroke="#ff0000" stroke-width="1.3"/>
<line x1="775.65" x2="775.65" y1="667" y2="671.6" stroke="#ff0000" stroke-width="1.3"/>
<line x1="785.65" x2="785.65" y1="667" y2="671.6" stroke="#ff0000" stroke-width="1.3"/>
<line x1="795.65" x2="795.65" y1="667" y2="671.6" stroke="#ff0000" stroke-width="1.3"/>
<line x1="805.65" x2="805.65" y1="667" y2="671.6" stroke="#ff0000" stroke-width="1.3"/>
<line x1="815.65" x2="815.65" y1="667" y2="671.6" stroke="#ff0000" stroke-width="1.3"/>
<line x1="825.65" x2="825.65" y1="667" y2="671.6" stroke="#ff0000" stroke-width="1.3"/>
<line x1="835.65" x2="835.65" y1="667" y2="671.6" stroke="#ff0000" stroke-width="1.3"/>
<line x1="845.65" x2="845.65" y1="667" y2="671.6" stroke="#ff0000" stroke-width="1.3"/>
<line x1="855.65" x2="855.65" y1="667" y2="671.6" stroke="#ff0000" stroke-width="1.3"/>
<line x1="865.65" x2="865.65" y1="667" y2="671.6" stroke="#ff0000" stroke-width="1.3"/>
<line x1="875.65" x2="875.65" y1="667" y2="671.6" stroke="#ff0000" stroke-width="1.3"/>
<line x1="885.65" x2="885.65" y1="667" y2="675" stroke="#ff0000" stroke-width="1.3"/>
<line x1="895.65" x2="895.65" y1="667" y2="671.6" stroke="#ff0000" stroke-width="1.3"/>
<line x1="905.65" x2="905.65" y1="667" y2="671.6" stroke="#ff0000" stroke-width="1.3"/>
<line x1="915.65" x2="915.65" y1="667" y2="671.6" stroke="#ff0000" stroke-width="1.3"/>
<line x1="925.65" x2="925.65" y1="667" y2="671.6" stroke="#ff0000" stroke-width="1.3"/>
<line x1="935.65" x2="935.65" y1="667" y2="671.6" stroke="#ff0000" stroke-width="1.3"/>
<line x1="945.65" x2="945.65" y1="667" y2="671.6" stroke="#ff0000" stroke-width="1.3"/>
<line x1="955.65" x2="955.65" y1="667" y2="671.6" stroke="#ff0000" stroke-width="1.3"/>
<line x1="965.65" x2="965.65" y1="667" y2="671.6" stroke="#ff0000" stroke-width="1.3"/>
<line x1="975.65" x2="975.65" y1="667" y2="671.6" stroke="#ff0000" stroke-width="1.3"/>
<line x1="985.65" x2="985.65" y1="667" y2="671.6" stroke="#ff0000" stroke-width="1.3"/>
<line x1="995.65" x2="995.65" y1="667" y2="671.6" stroke="#ff0000" stroke-width="1.3"/>
<line x1="1005.65" x2="1005.65" y1="667" y2="671.6" stroke="#ff0000" stroke-width="1.3"/>
<line x1="1015.65" x2="1015.65" y1="667" y2="671.6" stroke="#ff0000" stroke-width="1.3"/>
<line x1="1025.65" x2="1025.65" y1="667" y2="671.6" stroke="#ff0000" stroke-width="1.3"/>
<line x1="1035.65" x2="1035.65" y1="667" y2="671.6" stroke="#ff0000" stroke-width="1.3"/>
<line x1="1045.65" x2="1045.65" y1="667" y2="671.6" stroke="#ff0000" stroke-width="1.3"/>
<line x1="1055.65" x2="1055.65" y1="667" y2="675" stroke="#ff0000" stroke-width="1.3"/>
<line x1="1065.65" x2="1065.65" y1="667" y2="671.6" stroke="#ff0000" stroke-width="1.3"/>
<line x1="1075.65" x2="1075.65" y1="667" y2="671.6" stroke="#ff0000" stroke-width="1.3"/>
<line x1="1085.65" x2="1085.65" y1="667" y2="671.6" stroke="#ff0000" stroke-width="1.3"/>
<line x1="1095.65" x2="1095.65" y1="667" y2="671.6" stroke="#ff0000" stroke-width="1.3"/>
<line x1="1105.65" x2="1105.65" y1="667" y2="671.6" stroke="#ff0000" stroke-width="1.3"/>
<line x1="1115.65" x2="1115.65" y1="667" y2="671.6" stroke="#ff0000" stroke-width="1.3"/>
<line x1="1125.65" x2="1125.65" y1="667" y2="671.6" stroke="#ff0000" stroke-width="1.3"/>
<line x1="1135.65" x2="1135.65" y1="667" y2="671.6" stroke="#ff0000" stroke-width="1.3"/>
<line x1="1145.65" x2="1145.65" y1="667" y2="671.6" stroke="#ff0000" stroke-width="1.3"/>
<line x1="1155.65" x2="1155.65" y1="667" y2="671.6" stroke="#ff0000" stroke-width="1.3"/>
<line x1="1165.65" x2="1165.65" y1="667" y2="671.6" stroke="#ff0000" stroke-width="1.3"/>
<line x1="1175.65" x2="1175.65" y1="667" y2="671.6" stroke="#ff0000" stroke-width="1.3"/>
<line x1="1185.65" x2="1185.65" y1="667" y2="671.6" stroke="#ff0000" stroke-width="1.3"/>
<line x1="1195.65" x2="1195.65" y1="667" y2="671.6" stroke="#ff0000" stroke-width="1.3"/>
<line x1="1205.65" x2="1205.65" y1="667" y2="671.6" stroke="#ff0000" stroke-width="1.3"/>
<line x1="1215.65" x2="1215.65" y1="667" y2="671.6" stroke="#ff0000" stroke-width="1.3"/>
<line x1="1225.65" x2="1225.65" y1="667" y2="675" stroke="#ff0000" stroke-width="1.3"/>
<line x1="1235.65" x2="1235.65" y1="667" y2="671.6" stroke="#ff0000" stroke-width="1.3"/>
<line x1="1245.65" x2="1245.65" y1="667" y2="671.6" stroke="#ff0000" stroke-width="1.3"/>
<line x1="1255.65" x2="1255.65" y1="667" y2="671.6" stroke="#ff0000" stroke-width="1.3"/>
<line x1="1265.65" x2="1265.65" y1="667" y2="671.6" stroke="#ff0000" stroke-width="1.3"/>
<line x1="1275.65" x2="1275.65" y1="667" y2="671.6" stroke="#ff0000" stroke-width="1.3"/>
<line x1="1285.65" x2="1285.65" y1="667" y2="671.6" stroke="#ff0000" stroke-width="1.3"/>
<line x1="1295.65" x2="1295.65" y1="667" y2="671.6" stroke="#ff0000" stroke-width="1.3"/>
<line x1="1305.65" x2="1305.65" y1="667" y2="671.6" stroke="#ff0000" stroke-width="1.3"/>
<line x1="1315.65" x2="1315.65" y1="667" y2="671.6" stroke="#ff0000" stroke-width="1.3"/>
<line x1="1325.65" x2="1325.65" y1="667" y2="671.6" stroke="#ff0000" stroke-width="1.3"/>
<line x1="1335.65" x2="1335.65" y1="667" y2="671.6" stroke="#ff0000" stroke-width="1.3"/>
<line x1="1345.65" x2="1345.65" y1="667" y2="671.6" stroke="#ff0000" stroke-width="1.3"/>
<line x1="1355.65" x2="1355.65" y1="667" y2="671.6" stroke="#ff0000" stroke-width="1.3"/>
<line x1="1365.65" x2="1365.65" y1="667" y2="671.6" stroke="#ff0000" stroke-width="1.3"/>
<line x1="1375.65" x2="1375.65" y1="667" y2="671.6" stroke="#ff0000" stroke-width="1.3"/>
<line x1="1385.65" x2="1385.65" y1="667" y2="671.6" stroke="#ff0000" stroke-width="1.3"/>
<line x1="1395.65" x2="1395.65" y1="667" y2="675" stroke="#ff0000" stroke-width="1.3"/>
<line x1="1405.65" x2="1405.65" y1="667" y2="671.6" stroke="#ff0000" stroke-width="1.3"/>
<line x1="1415.65" x2="1415.65" y1="667" y2="671.6" stroke="#ff0000" stroke-width="1.3"/>
<line x1="1425.65" x2="1425.65" y1="667" y2="671.6" stroke="#ff0000" stroke-width="1.3"/>
<line x1="1435.65" x2="1435.65" y1="667" y2="671.6" stroke="#ff0000" stroke-width="1.3"/>
<line x1="1445.65" x2="1445.65" y1="667" y2="671.6" stroke="#ff0000" stroke-width="1.3"/>
<line x1="1455.65" x2="1455.65" y1="667" y2="671.6" stroke="#ff0000" stroke-width="1.3"/>
<line x1="1465.65" x2="1465.65" y1="667" y2="671.6" stroke="#ff0000" stroke-width="1.3"/>
<line x1="1475.65" x2="1475.65" y1="667" y2="671.6" stroke="#ff0000" stroke-width="1.3"/>
<line x1="1485.65" x2="1485.65" y1="667" y2="671.6" stroke="#ff0000" stroke-width="1.3"/>
<line x1="1495.65" x2="1495.65" y1="667" y2="671.6" stroke="#ff0000" stroke-width="1.3"/>
<line x1="1505.65" x2="1505.65" y1="667" y2="671.6" stroke="#ff0000" stroke-width="1.3"/>
<line x1="1515.65" x2="1515.65" y1="667" y2="671.6" stroke="#ff0000" stroke-width="1.3"/>
<line x1="1525.65" x2="1525.65" y1="667" y2="671.6" stroke="#ff0000" stroke-width="1.3"/>
<line x1="1535.65" x2="1535.65" y1="667" y2="671.6" stroke="#ff0000" stroke-width="1.3"/>
<line x1="1545.65" x2="1545.65" y1="667" y2="671.6" stroke="#ff0000" stroke-width="1.3"/>
<line x1="1555.65" x2="1555.65" y1="667" y2="671.6" stroke="#ff0000" stroke-width="1.3"/>
<line x1="1565.65" x2="1565.65" y1="667" y2="675" stroke="#ff0000" stroke-width="1.3"/>
<line x1="1575.65" x2="1575.65" y1="667" y2="671.6" stroke="#ff0000" stroke-width="1.3"/>
<line x1="1585.65" x2="1585.65" y1="667" y2="671.6" stroke="#ff0000" stroke-width="1.3"/>
<line x1="1595.65" x2="1595.65" y1="667" y2="671.6" stroke="#ff0000" stroke-width="1.3"/>
<line x1="1605.65" x2="1605.65" y1="667" y2="671.6" stroke="#ff0000" stroke-width="1.3"/>
<line x1="1615.65" x2="1615.65" y1="667" y2="671.6" stroke="#ff0000" stroke-width="1.3"/>
<line x1="1625.65" x2="1625.65" y1="667" y2="671.6" stroke="#ff0000" stroke-width="1.3"/>
<line x1="1635.65" x2="1635.65" y1="667" y2="671.6" stroke="#ff0000" stroke-width="1.3"/>
<line x1="1645.65" x2="1645.65" y1="667" y2="671.6" stroke="#ff0000" stroke-width="1.3"/>
<line x1="1655.65" x2="1655.65" y1="667" y2="671.6" stroke="#ff0000" stroke-width="1.3"/>
<line x1="1665.65" x2="1665.65" y1="667" y2="671.6" stroke="#ff0000" stroke-width="1.3"/>
<line x1="1675.65" x2="1675.65" y1="667" y2="671.6" stroke="#ff0000" stroke-width="1.3"/>
<line x1="1685.65" x2="1685.65" y1="667" y2="671.6" stroke="#ff0000" stroke-width="1.3"/>
<line x1="1695.65" x2="1695.65" y1="667" y2="671.6" stroke="#ff0000" stroke-width="1.3"/>
<line x1="1705.65" x2="1705.65" y1="667" y2="671.6" stroke="#ff0000" stroke-width="1.3"/>
<line x1="1715.65" x2="1715.65" y1="667" y2="671.6" stroke="#ff0000" stroke-width="1.3"/>
<line x1="1725.65" x2="1725.65" y1="667" y2="671.6" stroke="#ff0000" stroke-width="1.3"/>
<line x1="1735.65" x2="1735.65" y1="667" y2="675" stroke="#ff0000" stroke-width="1.3"/>
<line x1="1745.65" x2="1745.65" y1="667" y2="671.6" stroke="#ff0000" stroke-width="1.3"/>
<line x1="1755.65" x2="1755.65" y1="667" y2="671.6" stroke="#ff0000" stroke-width="1.3"/>
<line x1="1765.65" x2="1765.65" y1="667" y2="671.6" stroke="#ff0000" stroke-width="1.3"/>
<line x1="1775.65" x2="1775.65" y1="667" y2="671.6" stroke="#ff0000" stroke-width="1.3"/>
<line x1="1785.65" x2="1785.65" y1="667" y2="671.6" stroke="#ff0000" stroke-width="1.3"/>
<line x1="1795.65" x2="1795.65" y1="667" y2="671.6" stroke="#ff0000" stroke-width="1.3"/>
<line x1="1805.65" x2="1805.65" y1="667" y2="671.6" stroke="#ff0000" stroke-width="1.3"/>
<line x1="1815.65" x2="1815.65" y1="667" y2="671.6" stroke="#ff0000" stroke-width="1.3"/>
<line x1="1825.65" x2="1825.65" y1="667" y2="671.6" stroke="#ff0000" stroke-width="1.3"/>
<g shape-rendering="geometricPrecision">
<rect x="32.5" y="241.86" width="6.3" height="11.78" fill="#00ffff"/>
<rect x="44.9" y="252.74" width="1.5" height="7.09" fill="#ff0000"/>
<rect x="43.05" y="247.45" width="6.2" height="5.19" fill="#000" stroke="#ff0000" stroke-width="1.5"/>
<rect x="52.5" y="247.55" width="6.3" height="11.78" fill="#00ffff"/>
<rect x="64.9" y="241.36" width="1.5" height="7.09" fill="#ff0000"/>
<rect x="63.05" y="247.45" width="6.2" height="10.88" fill="#000" stroke="#ff0000" stroke-width="1.5"/>
<rect x="72.5" y="236.18" width="6.3" height="6.09" fill="#00ffff"/>
<rect x="82.5" y="236.18" width="6.3" height="23.15" fill="#00ffff"/>
<rect x="93.05" y="241.76" width="6.2" height="16.56" fill="#000" stroke="#ff0000" stroke-width="1.5"/>
<rect x="104.9" y="252.74" width="1.5" height="7.09" fill="#ff0000"/>
<rect x="103.05" y="247.45" width="6.2" height="5.19" fill="#000" stroke="#ff0000" stroke-width="1.5"/>
<rect x="113.05" y="253.14" width="6.2" height="5.19" fill="#000" stroke="#ff0000" stroke-width="1.5"/>
<rect x="124.9" y="247.05" width="1.5" height="7.09" fill="#00ffff"/>
<rect x="124.9" y="258.43" width="1.5" height="7.09" fill="#00ffff"/>
<rect x="122.5" y="253.24" width="6.3" height="6.09" fill="#00ffff"/>
<rect x="134.9" y="252.74" width="1.5" height="18.46" fill="#ff0000"/>
<rect x="132.55" y="258.02" width="7" height="2.2" fill="#ff0000"/>
<rect x="144.9" y="258.43" width="1.5" height="18.46" fill="#00ffff"/>
<rect x="142.5" y="247.55" width="6.3" height="11.78" fill="#00ffff"/>
<rect x="152.55" y="246.65" width="7" height="2.2" fill="#ff0000"/>
<rect x="162.55" y="246.65" width="7" height="2.2" fill="#ff0000"/>
<rect x="174.9" y="247.05" width="1.5" height="12.78" fill="#ff0000"/>
<rect x="173.05" y="230.39" width="6.2" height="16.56" fill="#000" stroke="#ff0000" stroke-width="1.5"/>
<rect x="183.05" y="207.64" width="6.2" height="33.62" fill="#000" stroke="#ff0000" stroke-width="1.5"/>
<rect x="194.9" y="207.24" width="1.5" height="41.21" fill="#ff0000"/>
<rect x="193.05" y="196.26" width="6.2" height="10.88" fill="#000" stroke="#ff0000" stroke-width="1.5"/>
<rect x="204.9" y="190.18" width="1.5" height="7.09" fill="#00ffff"/>
<rect x="204.9" y="201.55" width="1.5" height="12.78" fill="#00ffff"/>
<rect x="202.5" y="196.36" width="6.3" height="6.09" fill="#00ffff"/>
<rect x="214.9" y="201.55" width="1.5" height="7.09" fill="#00ffff"/>
<rect x="212.5" y="207.74" width="6.3" height="17.46" fill="#00ffff"/>
<rect x="224.9" y="207.24" width="1.5" height="7.09" fill="#ff0000"/>
<rect x="223.05" y="213.32" width="6.2" height="10.88" fill="#000" stroke="#ff0000" stroke-width="1.5"/>
<rect x="234.9" y="207.24" width="1.5" height="18.46" fill="#ff0000"/>
<rect x="232.55" y="223.9" width="7" height="2.2" fill="#ff0000"/>
<rect x="242.5" y="224.8" width="6.3" height="17.46" fill="#00ffff"/>
<rect x="253.05" y="219.01" width="6.2" height="22.25" fill="#000" stroke="#ff0000" stroke-width="1.5"/>
<rect x="264.9" y="212.93" width="1.5" height="7.09" fill="#00ffff"/>
<rect x="262.5" y="219.11" width="6.3" height="17.46" fill="#00ffff"/>
<rect x="274.9" y="218.61" width="1.5" height="18.46" fill="#ff0000"/>
<rect x="272.55" y="229.59" width="7" height="2.2" fill="#ff0000"/>
<rect x="284.9" y="229.99" width="1.5" height="29.84" fill="#00ffff"/>
<rect x="282.5" y="219.11" width="6.3" height="11.78" fill="#00ffff"/>
<rect x="294.9" y="229.99" width="1.5" height="7.09" fill="#00ffff"/>
<rect x="292.5" y="236.18" width="6.3" height="11.78" fill="#00ffff"/>
<rect x="303.05" y="224.7" width="6.2" height="22.25" fill="#000" stroke="#ff0000" stroke-width="1.5"/>
<rect x="314.9" y="224.3" width="1.5" height="12.78" fill="#ff0000"/>
<rect x="312.55" y="223.9" width="7" height="2.2" fill="#ff0000"/>
<rect x="322.5" y="224.8" width="6.3" height="17.46" fill="#00ffff"/>
<rect x="332.55" y="240.96" width="7" height="2.2" fill="#ff0000"/>
<rect x="343.05" y="224.7" width="6.2" height="16.56" fill="#000" stroke="#ff0000" stroke-width="1.5"/>
<rect x="352.5" y="224.8" width="6.3" height="6.09" fill="#00ffff"/>
<rect x="364.9" y="218.61" width="1.5" height="18.46" fill="#ff0000"/>
<rect x="362.55" y="229.59" width="7" height="2.2" fill="#ff0000"/>
<rect x="374.9" y="212.93" width="1.5" height="12.78" fill="#ff0000"/>
<rect x="374.9" y="229.99" width="1.5" height="18.46" fill="#ff0000"/>
<rect x="373.05" y="224.7" width="6.2" height="5.19" fill="#000" stroke="#ff0000" stroke-width="1.5"/>
<rect x="384.9" y="224.3" width="1.5" height="7.09" fill="#ff0000"/>
<rect x="383.05" y="230.39" width="6.2" height="5.19" fill="#000" stroke="#ff0000" stroke-width="1.5"/>
<rect x="392.5" y="230.49" width="6.3" height="11.78" fill="#00ffff"/>
<rect x="402.5" y="241.86" width="6.3" height="6.09" fill="#00ffff"/>
<rect x="414.9" y="235.68" width="1.5" height="18.46" fill="#00ffff"/>
<rect x="412.5" y="230.49" width="6.3" height="6.09" fill="#00ffff"/>
<rect x="424.9" y="235.68" width="1.5" height="7.09" fill="#ff0000"/>
<rect x="423.05" y="219.01" width="6.2" height="16.56" fill="#000" stroke="#ff0000" stroke-width="1.5"/>
<rect x="434.9" y="212.93" width="1.5" height="7.09" fill="#00ffff"/>
<rect x="432.5" y="219.11" width="6.3" height="11.78" fill="#00ffff"/>
<rect x="442.5" y="224.8" width="6.3" height="17.46" fill="#00ffff"/>
<rect x="454.9" y="235.68" width="1.5" height="7.09" fill="#ff0000"/>
<rect x="452.55" y="240.96" width="7" height="2.2" fill="#ff0000"/>
<rect x="463.05" y="236.07" width="6.2" height="10.88" fill="#000" stroke="#ff0000" stroke-width="1.5"/>
<rect x="474.9" y="235.68" width="1.5" height="7.09" fill="#ff0000"/>
<rect x="473.05" y="213.32" width="6.2" height="22.25" fill="#000" stroke="#ff0000" stroke-width="1.5"/>
<rect x="482.5" y="213.43" width="6.3" height="23.15" fill="#00ffff"/>
<rect x="494.9" y="229.99" width="1.5" height="18.46" fill="#ff0000"/>
<rect x="492.55" y="235.28" width="7" height="2.2" fill="#ff0000"/>
<rect x="504.9" y="241.36" width="1.5" height="7.09" fill="#ff0000"/>
<rect x="503.05" y="230.39" width="6.2" height="10.88" fill="#000" stroke="#ff0000" stroke-width="1.5"/>
<rect x="514.9" y="235.68" width="1.5" height="7.09" fill="#00ffff"/>
<rect x="512.5" y="224.8" width="6.3" height="11.78" fill="#00ffff"/>
<rect x="524.9" y="218.61" width="1.5" height="7.09" fill="#ff0000"/>
<rect x="523.05" y="224.7" width="6.2" height="10.88" fill="#000" stroke="#ff0000" stroke-width="1.5"/>
<rect x="534.9" y="235.68" width="1.5" height="7.09" fill="#00ffff"/>
<rect x="532.5" y="224.8" width="6.3" height="11.78" fill="#00ffff"/>
<rect x="542.5" y="236.18" width="6.3" height="17.46" fill="#00ffff"/>
<rect x="554.9" y="235.68" width="1.5" height="24.15" fill="#ff0000"/>
<rect x="552.55" y="252.34" width="7" height="2.2" fill="#ff0000"/>
<rect x="563.05" y="224.7" width="6.2" height="27.94" fill="#000" stroke="#ff0000" stroke-width="1.5"/>
<rect x="574.9" y="190.18" width="1.5" height="29.84" fill="#ff0000"/>
<rect x="574.9" y="224.3" width="1.5" height="18.46" fill="#ff0000"/>
<rect x="573.05" y="219.01" width="6.2" height="5.19" fill="#000" stroke="#ff0000" stroke-width="1.5"/>
<rect x="583.05" y="213.32" width="6.2" height="5.19" fill="#000" stroke="#ff0000" stroke-width="1.5"/>
<rect x="594.9" y="218.61" width="1.5" height="18.46" fill="#00ffff"/>
<rect x="592.5" y="213.43" width="6.3" height="6.09" fill="#00ffff"/>
<rect x="602.5" y="224.8" width="6.3" height="28.84" fill="#00ffff"/>
<rect x="614.9" y="252.74" width="1.5" height="7.09" fill="#ff0000"/>
<rect x="613.05" y="219.01" width="6.2" height="33.62" fill="#000" stroke="#ff0000" stroke-width="1.5"/>
<rect x="624.9" y="281.18" width="1.5" height="46.9" fill="#00ffff"/>
<rect x="622.5" y="122.42" width="6.3" height="159.65" fill="#00ffff"/>
<rect x="634.9" y="269.8" width="1.5" height="29.84" fill="#ff0000"/>
<rect x="632.55" y="280.77" width="7" height="2.2" fill="#ff0000"/>
<rect x="644.9" y="298.24" width="1.5" height="18.46" fill="#00ffff"/>
<rect x="642.5" y="293.05" width="6.3" height="6.09" fill="#00ffff"/>
<rect x="654.9" y="281.18" width="1.5" height="12.78" fill="#ff0000"/>
<rect x="654.9" y="309.61" width="1.5" height="12.78" fill="#ff0000"/>
<rect x="653.05" y="292.95" width="6.2" height="16.56" fill="#000" stroke="#ff0000" stroke-width="1.5"/>
<rect x="664.9" y="292.55" width="1.5" height="12.78" fill="#ff0000"/>
<rect x="663.05" y="281.57" width="6.2" height="10.88" fill="#000" stroke="#ff0000" stroke-width="1.5"/>
<rect x="674.9" y="247.05" width="1.5" height="12.78" fill="#ff0000"/>
<rect x="674.9" y="281.18" width="1.5" height="12.78" fill="#ff0000"/>
<rect x="673.05" y="258.82" width="6.2" height="22.25" fill="#000" stroke="#ff0000" stroke-width="1.5"/>
<rect x="684.9" y="235.68" width="1.5" height="18.46" fill="#ff0000"/>
<rect x="684.9" y="269.8" width="1.5" height="12.78" fill="#ff0000"/>
<rect x="683.05" y="253.14" width="6.2" height="16.56" fill="#000" stroke="#ff0000" stroke-width="1.5"/>
<rect x="694.9" y="241.36" width="1.5" height="7.09" fill="#00ffff"/>
<rect x="692.5" y="247.55" width="6.3" height="34.52" fill="#00ffff"/>
<rect x="704.9" y="264.11" width="1.5" height="7.09" fill="#ff0000"/>
<rect x="704.9" y="275.49" width="1.5" height="7.09" fill="#ff0000"/>
<rect x="703.05" y="270.2" width="6.2" height="5.19" fill="#000" stroke="#ff0000" stroke-width="1.5"/>
<rect x="714.9" y="264.11" width="1.5" height="7.09" fill="#00ffff"/>
<rect x="714.9" y="275.49" width="1.5" height="12.78" fill="#00ffff"/>
<rect x="712.5" y="270.3" width="6.3" height="6.09" fill="#00ffff"/>
<rect x="724.9" y="258.43" width="1.5" height="18.46" fill="#00ffff"/>
<rect x="722.5" y="275.99" width="6.3" height="17.46" fill="#00ffff"/>
<rect x="734.9" y="281.18" width="1.5" height="24.15" fill="#ff0000"/>
<rect x="732.55" y="292.15" width="7" height="2.2" fill="#ff0000"/>
<rect x="744.9" y="264.11" width="1.5" height="7.09" fill="#ff0000"/>
<rect x="744.9" y="286.86" width="1.5" height="7.09" fill="#ff0000"/>
<rect x="743.05" y="270.2" width="6.2" height="16.56" fill="#000" stroke="#ff0000" stroke-width="1.5"/>
<rect x="752.5" y="270.3" width="6.3" height="11.78" fill="#00ffff"/>
<rect x="764.9" y="275.49" width="1.5" height="7.09" fill="#00ffff"/>
<rect x="764.9" y="298.24" width="1.5" height="7.09" fill="#00ffff"/>
<rect x="762.5" y="281.68" width="6.3" height="17.46" fill="#00ffff"/>
<rect x="774.9" y="281.18" width="1.5" height="12.78" fill="#ff0000"/>
<rect x="774.9" y="298.24" width="1.5" height="12.78" fill="#ff0000"/>
<rect x="773.05" y="292.95" width="6.2" height="5.19" fill="#000" stroke="#ff0000" stroke-width="1.5"/>
<rect x="784.9" y="286.86" width="1.5" height="7.09" fill="#00ffff"/>
<rect x="782.5" y="293.05" width="6.3" height="11.78" fill="#00ffff"/>
<rect x="794.9" y="298.24" width="1.5" height="7.09" fill="#00ffff"/>
<rect x="792.5" y="304.43" width="6.3" height="11.78" fill="#00ffff"/>
<rect x="804.9" y="303.93" width="1.5" height="12.78" fill="#ff0000"/>
<rect x="802.55" y="314.9" width="7" height="2.2" fill="#ff0000"/>
<rect x="812.5" y="304.43" width="6.3" height="11.78" fill="#00ffff"/>
<rect x="824.9" y="315.3" width="1.5" height="7.09" fill="#ff0000"/>
<rect x="823.05" y="298.64" width="6.2" height="16.56" fill="#000" stroke="#ff0000" stroke-width="1.5"/>
<rect x="834.9" y="298.24" width="1.5" height="12.78" fill="#ff0000"/>
<rect x="833.05" y="287.26" width="6.2" height="10.88" fill="#000" stroke="#ff0000" stroke-width="1.5"/>
<rect x="842.5" y="287.36" width="6.3" height="11.78" fill="#00ffff"/>
<rect x="854.9" y="309.61" width="1.5" height="7.09" fill="#00ffff"/>
<rect x="852.5" y="298.74" width="6.3" height="11.78" fill="#00ffff"/>
<rect x="862.5" y="298.74" width="6.3" height="28.84" fill="#00ffff"/>
<rect x="874.9" y="349.43" width="1.5" height="12.78" fill="#00ffff"/>
<rect x="872.5" y="315.8" width="6.3" height="34.52" fill="#00ffff"/>
<rect x="884.9" y="343.74" width="1.5" height="7.09" fill="#00ffff"/>
<rect x="884.9" y="360.8" width="1.5" height="12.78" fill="#00ffff"/>
<rect x="882.5" y="349.93" width="6.3" height="11.78" fill="#00ffff"/>
<rect x="892.5" y="361.3" width="6.3" height="23.15" fill="#00ffff"/>
<rect x="904.9" y="389.24" width="1.5" height="29.84" fill="#00ffff"/>
<rect x="902.5" y="384.05" width="6.3" height="6.09" fill="#00ffff"/>
<rect x="912.5" y="389.74" width="6.3" height="17.46" fill="#00ffff"/>
<rect x="924.9" y="400.61" width="1.5" height="29.84" fill="#ff0000"/>
<rect x="922.55" y="405.9" width="7" height="2.2" fill="#ff0000"/>
<rect x="934.9" y="383.55" width="1.5" height="7.09" fill="#ff0000"/>
<rect x="933.05" y="389.64" width="6.2" height="16.56" fill="#000" stroke="#ff0000" stroke-width="1.5"/>
<rect x="944.9" y="383.55" width="1.5" height="18.46" fill="#ff0000"/>
<rect x="942.55" y="394.52" width="7" height="2.2" fill="#ff0000"/>
<rect x="954.9" y="366.49" width="1.5" height="12.78" fill="#ff0000"/>
<rect x="954.9" y="400.61" width="1.5" height="12.78" fill="#ff0000"/>
<rect x="953.05" y="378.26" width="6.2" height="22.25" fill="#000" stroke="#ff0000" stroke-width="1.5"/>
<rect x="964.9" y="366.49" width="1.5" height="18.46" fill="#ff0000"/>
<rect x="962.55" y="377.46" width="7" height="2.2" fill="#ff0000"/>
<rect x="974.9" y="338.05" width="1.5" height="12.78" fill="#ff0000"/>
<rect x="974.9" y="377.86" width="1.5" height="7.09" fill="#ff0000"/>
<rect x="973.05" y="349.82" width="6.2" height="27.94" fill="#000" stroke="#ff0000" stroke-width="1.5"/>
<rect x="984.9" y="349.43" width="1.5" height="18.46" fill="#ff0000"/>
<rect x="983.05" y="327.07" width="6.2" height="22.25" fill="#000" stroke="#ff0000" stroke-width="1.5"/>
<rect x="994.9" y="332.36" width="1.5" height="12.78" fill="#00ffff"/>
<rect x="992.5" y="327.18" width="6.3" height="6.09" fill="#00ffff"/>
<rect x="1004.9" y="320.99" width="1.5" height="12.78" fill="#ff0000"/>
<rect x="1002.55" y="331.96" width="7" height="2.2" fill="#ff0000"/>
<rect x="1013.05" y="315.7" width="6.2" height="5.19" fill="#000" stroke="#ff0000" stroke-width="1.5"/>
<rect x="1023.05" y="310.01" width="6.2" height="5.19" fill="#000" stroke="#ff0000" stroke-width="1.5"/>
<rect x="1034.9" y="303.93" width="1.5" height="7.09" fill="#00ffff"/>
<rect x="1032.5" y="310.11" width="6.3" height="11.78" fill="#00ffff"/>
<rect x="1044.9" y="303.93" width="1.5" height="7.09" fill="#ff0000"/>
<rect x="1043.05" y="310.01" width="6.2" height="10.88" fill="#000" stroke="#ff0000" stroke-width="1.5"/>
<rect x="1054.9" y="303.93" width="1.5" height="7.09" fill="#00ffff"/>
<rect x="1052.5" y="310.11" width="6.3" height="6.09" fill="#00ffff"/>
<rect x="1064.9" y="309.61" width="1.5" height="7.09" fill="#ff0000"/>
<rect x="1062.55" y="314.9" width="7" height="2.2" fill="#ff0000"/>
<rect x="1074.9" y="309.61" width="1.5" height="7.09" fill="#ff0000"/>
<rect x="1072.55" y="314.9" width="7" height="2.2" fill="#ff0000"/>
<rect x="1084.9" y="298.24" width="1.5" height="7.09" fill="#ff0000"/>
<rect x="1083.05" y="304.32" width="6.2" height="10.88" fill="#000" stroke="#ff0000" stroke-width="1.5"/>
<rect x="1093.05" y="298.64" width="6.2" height="5.19" fill="#000" stroke="#ff0000" stroke-width="1.5"/>
<rect x="1102.5" y="298.74" width="6.3" height="17.46" fill="#00ffff"/>
<rect x="1112.55" y="314.9" width="7" height="2.2" fill="#ff0000"/>
<rect x="1123.05" y="310.01" width="6.2" height="5.19" fill="#000" stroke="#ff0000" stroke-width="1.5"/>
<rect x="1133.05" y="292.95" width="6.2" height="22.25" fill="#000" stroke="#ff0000" stroke-width="1.5"/>
<rect x="1144.9" y="292.55" width="1.5" height="7.09" fill="#ff0000"/>
<rect x="1143.05" y="287.26" width="6.2" height="5.19" fill="#000" stroke="#ff0000" stroke-width="1.5"/>
<rect x="1154.9" y="286.86" width="1.5" height="7.09" fill="#ff0000"/>
<rect x="1153.05" y="275.89" width="6.2" height="10.88" fill="#000" stroke="#ff0000" stroke-width="1.5"/>
<rect x="1163.05" y="247.45" width="6.2" height="27.94" fill="#000" stroke="#ff0000" stroke-width="1.5"/>
<rect x="1174.9" y="218.61" width="1.5" height="35.52" fill="#00ffff"/>
<rect x="1174.9" y="258.43" width="1.5" height="7.09" fill="#00ffff"/>
<rect x="1172.5" y="253.24" width="6.3" height="6.09" fill="#00ffff"/>
<rect x="1184.9" y="269.8" width="1.5" height="7.09" fill="#00ffff"/>
<rect x="1182.5" y="258.93" width="6.3" height="11.78" fill="#00ffff"/>
<rect x="1194.9" y="258.43" width="1.5" height="12.78" fill="#00ffff"/>
<rect x="1192.5" y="270.3" width="6.3" height="6.09" fill="#00ffff"/>
<rect x="1204.9" y="258.43" width="1.5" height="7.09" fill="#ff0000"/>
<rect x="1204.9" y="275.49" width="1.5" height="7.09" fill="#ff0000"/>
<rect x="1203.05" y="264.51" width="6.2" height="10.88" fill="#000" stroke="#ff0000" stroke-width="1.5"/>
<rect x="1214.9" y="258.43" width="1.5" height="18.46" fill="#ff0000"/>
<rect x="1212.55" y="263.71" width="7" height="2.2" fill="#ff0000"/>
<rect x="1224.9" y="247.05" width="1.5" height="12.78" fill="#ff0000"/>
<rect x="1223.05" y="258.82" width="6.2" height="5.19" fill="#000" stroke="#ff0000" stroke-width="1.5"/>
<rect x="1234.9" y="252.74" width="1.5" height="12.78" fill="#ff0000"/>
<rect x="1232.55" y="258.02" width="7" height="2.2" fill="#ff0000"/>
<rect x="1244.9" y="258.43" width="1.5" height="12.78" fill="#ff0000"/>
<rect x="1242.55" y="258.02" width="7" height="2.2" fill="#ff0000"/>
<rect x="1254.9" y="264.11" width="1.5" height="7.09" fill="#ff0000"/>
<rect x="1252.55" y="263.71" width="7" height="2.2" fill="#ff0000"/>
<rect x="1263.05" y="253.14" width="6.2" height="10.88" fill="#000" stroke="#ff0000" stroke-width="1.5"/>
<rect x="1274.9" y="247.05" width="1.5" height="12.78" fill="#ff0000"/>
<rect x="1272.55" y="252.34" width="7" height="2.2" fill="#ff0000"/>
<rect x="1282.5" y="241.86" width="6.3" height="11.78" fill="#00ffff"/>
<rect x="1292.55" y="246.65" width="7" height="2.2" fill="#ff0000"/>
<rect x="1304.9" y="247.05" width="1.5" height="7.09" fill="#ff0000"/>
<rect x="1303.05" y="241.76" width="6.2" height="5.19" fill="#000" stroke="#ff0000" stroke-width="1.5"/>
<rect x="1314.9" y="235.68" width="1.5" height="18.46" fill="#ff0000"/>
<rect x="1312.55" y="240.96" width="7" height="2.2" fill="#ff0000"/>
<rect x="1324.9" y="252.74" width="1.5" height="7.09" fill="#00ffff"/>
<rect x="1322.5" y="241.86" width="6.3" height="11.78" fill="#00ffff"/>
<rect x="1332.55" y="252.34" width="7" height="2.2" fill="#ff0000"/>
<rect x="1343.05" y="213.32" width="6.2" height="39.31" fill="#000" stroke="#ff0000" stroke-width="1.5"/>
<rect x="1354.9" y="207.24" width="1.5" height="12.78" fill="#ff0000"/>
<rect x="1352.55" y="212.53" width="7" height="2.2" fill="#ff0000"/>
<rect x="1364.9" y="235.68" width="1.5" height="7.09" fill="#00ffff"/>
<rect x="1362.5" y="213.43" width="6.3" height="23.15" fill="#00ffff"/>
<rect x="1374.9" y="229.99" width="1.5" height="18.46" fill="#ff0000"/>
<rect x="1372.55" y="235.28" width="7" height="2.2" fill="#ff0000"/>
<rect x="1383.05" y="219.01" width="6.2" height="16.56" fill="#000" stroke="#ff0000" stroke-width="1.5"/>
<rect x="1392.5" y="219.11" width="6.3" height="23.15" fill="#00ffff"/>
<rect x="1402.5" y="241.86" width="6.3" height="6.09" fill="#00ffff"/>
<rect x="1413.05" y="236.07" width="6.2" height="10.88" fill="#000" stroke="#ff0000" stroke-width="1.5"/>
<rect x="1424.9" y="235.68" width="1.5" height="18.46" fill="#ff0000"/>
<rect x="1422.55" y="240.96" width="7" height="2.2" fill="#ff0000"/>
<rect x="1433.05" y="230.39" width="6.2" height="10.88" fill="#000" stroke="#ff0000" stroke-width="1.5"/>
<rect x="1444.9" y="218.61" width="1.5" height="7.09" fill="#ff0000"/>
<rect x="1444.9" y="229.99" width="1.5" height="7.09" fill="#ff0000"/>
<rect x="1443.05" y="224.7" width="6.2" height="5.19" fill="#000" stroke="#ff0000" stroke-width="1.5"/>
<rect x="1452.5" y="224.8" width="6.3" height="17.46" fill="#00ffff"/>
<rect x="1464.9" y="229.99" width="1.5" height="7.09" fill="#ff0000"/>
<rect x="1463.05" y="236.07" width="6.2" height="5.19" fill="#000" stroke="#ff0000" stroke-width="1.5"/>
<rect x="1473.05" y="213.32" width="6.2" height="22.25" fill="#000" stroke="#ff0000" stroke-width="1.5"/>
<rect x="1484.9" y="207.24" width="1.5" height="7.09" fill="#00ffff"/>
<rect x="1482.5" y="202.05" width="6.3" height="6.09" fill="#00ffff"/>
<rect x="1494.9" y="207.24" width="1.5" height="7.09" fill="#ff0000"/>
<rect x="1492.55" y="206.84" width="7" height="2.2" fill="#ff0000"/>
<rect x="1504.9" y="178.8" width="1.5" height="18.46" fill="#ff0000"/>
<rect x="1503.05" y="196.26" width="6.2" height="10.88" fill="#000" stroke="#ff0000" stroke-width="1.5"/>
<rect x="1513.05" y="179.2" width="6.2" height="16.56" fill="#000" stroke="#ff0000" stroke-width="1.5"/>
<rect x="1524.9" y="184.49" width="1.5" height="7.09" fill="#00ffff"/>
<rect x="1522.5" y="190.68" width="6.3" height="23.15" fill="#00ffff"/>
<rect x="1534.9" y="207.24" width="1.5" height="7.09" fill="#00ffff"/>
<rect x="1532.5" y="213.43" width="6.3" height="11.78" fill="#00ffff"/>
<rect x="1544.9" y="201.55" width="1.5" height="12.78" fill="#00ffff"/>
<rect x="1542.5" y="213.43" width="6.3" height="6.09" fill="#00ffff"/>
<rect x="1552.5" y="219.11" width="6.3" height="11.78" fill="#00ffff"/>
<rect x="1562.55" y="223.9" width="7" height="2.2" fill="#ff0000"/>
<rect x="1574.9" y="207.24" width="1.5" height="18.46" fill="#ff0000"/>
<rect x="1572.55" y="223.9" width="7" height="2.2" fill="#ff0000"/>
<rect x="1583.05" y="207.64" width="6.2" height="16.56" fill="#000" stroke="#ff0000" stroke-width="1.5"/>
<rect x="1594.9" y="212.93" width="1.5" height="12.78" fill="#00ffff"/>
<rect x="1592.5" y="207.74" width="6.3" height="6.09" fill="#00ffff"/>
<rect x="1602.55" y="212.53" width="7" height="2.2" fill="#ff0000"/>
<rect x="1612.5" y="213.43" width="6.3" height="17.46" fill="#00ffff"/>
<rect x="1622.55" y="229.59" width="7" height="2.2" fill="#ff0000"/>
<rect x="1633.05" y="224.7" width="6.2" height="5.19" fill="#000" stroke="#ff0000" stroke-width="1.5"/>
<rect x="1642.5" y="224.8" width="6.3" height="23.15" fill="#00ffff"/>
<rect x="1654.9" y="235.68" width="1.5" height="12.78" fill="#ff0000"/>
<rect x="1652.55" y="246.65" width="7" height="2.2" fill="#ff0000"/>
<rect x="1664.9" y="212.93" width="1.5" height="12.78" fill="#00ffff"/>
<rect x="1662.5" y="207.74" width="6.3" height="6.09" fill="#00ffff"/>
<rect x="1674.9" y="218.61" width="1.5" height="12.78" fill="#ff0000"/>
<rect x="1672.55" y="223.9" width="7" height="2.2" fill="#ff0000"/>
<rect x="1684.9" y="224.3" width="1.5" height="12.78" fill="#ff0000"/>
<rect x="1682.55" y="223.9" width="7" height="2.2" fill="#ff0000"/>
<rect x="1694.9" y="224.3" width="1.5" height="24.15" fill="#ff0000"/>
<rect x="1693.05" y="219.01" width="6.2" height="5.19" fill="#000" stroke="#ff0000" stroke-width="1.5"/>
<rect x="1702.55" y="229.59" width="7" height="2.2" fill="#ff0000"/>
<rect x="1714.9" y="218.61" width="1.5" height="12.78" fill="#ff0000"/>
<rect x="1712.55" y="229.59" width="7" height="2.2" fill="#ff0000"/>
<rect x="1723.05" y="219.01" width="6.2" height="10.88" fill="#000" stroke="#ff0000" stroke-width="1.5"/>
<rect x="1733.05" y="207.64" width="6.2" height="10.88" fill="#000" stroke="#ff0000" stroke-width="1.5"/>
<rect x="1742.55" y="206.84" width="7" height="2.2" fill="#ff0000"/>
<rect x="1754.9" y="207.24" width="1.5" height="7.09" fill="#ff0000"/>
<rect x="1752.55" y="206.84" width="7" height="2.2" fill="#ff0000"/>
<rect x="1764.9" y="207.24" width="1.5" height="7.09" fill="#ff0000"/>
<rect x="1762.55" y="206.84" width="7" height="2.2" fill="#ff0000"/>
<rect x="1773.05" y="201.95" width="6.2" height="5.19" fill="#000" stroke="#ff0000" stroke-width="1.5"/>
<rect x="1784.9" y="201.55" width="1.5" height="7.09" fill="#ff0000"/>
<rect x="1782.55" y="201.15" width="7" height="2.2" fill="#ff0000"/>
<rect x="1794.9" y="201.55" width="1.5" height="7.09" fill="#ff0000"/>
<rect x="1792.55" y="201.15" width="7" height="2.2" fill="#ff0000"/>
<rect x="1804.9" y="207.24" width="1.5" height="7.09" fill="#00ffff"/>
<rect x="1802.5" y="202.05" width="6.3" height="6.09" fill="#00ffff"/>
<rect x="1812.5" y="213.43" width="6.3" height="6.09" fill="#00ffff"/>
<rect x="1822.55" y="218.21" width="7" height="2.2" fill="#ff0000"/>
</g>
<polyline points="35.65,239.3 45.65,239.23 55.65,239.45 65.65,239.38 75.65,239.16 85.65,239.38 95.65,239.16 105.65,239.09 115.65,240.37 125.65,241.79 135.65,243.21 145.65,243.88 155.65,244.27 165.65,244.65 175.65,244.61 185.65,244 195.65,243.1 205.65,242.35 215.65,242.16 225.65,241.69 235.65,241.51 245.65,241.79 255.65,241.51 265.65,241.65 275.65,241.65 285.65,241.65 295.65,242.08 305.65,241.04 315.65,240 325.65,239.39 335.65,238.78 345.65,238.34 355.65,238.04 365.65,237.74 375.65,237.3 385.65,237 395.65,236.99 405.65,237.11 415.65,236.96 425.65,236.38 435.65,235.81 445.65,235.66 455.65,235.24 465.65,234.95 475.65,234.24 485.65,233.67 495.65,233.53 505.65,233.1 515.65,232.68 525.65,231.82 535.65,231.26 545.65,231.11 555.65,231.26 565.65,230.69 575.65,230.4 585.65,230.55 595.65,231.11 605.65,232.39 615.65,232.25 625.65,233.96 635.65,235.38 645.65,236.8 655.65,238.65 665.65,239.79 675.65,240.5 685.65,241.07 695.65,241.92 705.65,243.06 715.65,244.34 725.65,245.62 735.65,246.9 745.65,248.03 755.65,249.31 765.65,251.02 775.65,252.73 785.65,254.57 795.65,256.42 805.65,258.13 815.65,260.12 825.65,262.11 835.65,263.53 845.65,264.95 855.65,266.66 865.65,268.94 875.65,272.35 885.65,275.48 895.65,279.17 905.65,283.15 915.65,287.42 925.65,291.97 935.65,295.81 945.65,299.36 955.65,302.49 965.65,306.33 975.65,309.6 985.65,312.45 995.65,315.29 1005.65,317.28 1015.65,319.7 1025.65,320.41 1035.65,321.4 1045.65,321.69 1055.65,322.26 1065.65,323.11 1075.65,324.53 1085.65,325.81 1095.65,326.24 1105.65,327.38 1115.65,328.37 1125.65,328.8 1135.65,328.8 1145.65,329.22 1155.65,329.08 1165.65,327.8 1175.65,326.95 1185.65,326.1 1195.65,325.1 1205.65,323.82 1215.65,322.54 1225.65,321.55 1235.65,320.83 1245.65,319.84 1255.65,318.7 1265.65,316.85 1275.65,314.44 1285.65,311.73 1295.65,308.32 1305.65,304.62 1315.65,300.5 1325.65,296.66 1335.65,293.25 1345.65,288.7 1355.65,284.58 1365.65,281.02 1375.65,278.18 1385.65,275.48 1395.65,273.2 1405.65,271.07 1415.65,269.08 1425.65,267.37 1435.65,265.1 1445.65,262.96 1455.65,261.12 1465.65,259.12 1475.65,256.57 1485.65,254.15 1495.65,251.87 1505.65,248.89 1515.65,245.48 1525.65,243.06 1535.65,241.35 1545.65,239.65 1555.65,238.51 1565.65,237.94 1575.65,237.09 1585.65,235.52 1595.65,233.96 1605.65,232.68 1615.65,231.82 1625.65,231.11 1635.65,230.26 1645.65,229.98 1655.65,229.55 1665.65,228.55 1675.65,227.84 1685.65,227.13 1695.65,226.42 1705.65,226.14 1715.65,225.85 1725.65,225 1735.65,223.86 1745.65,223.72 1755.65,223.58 1765.65,222.87 1775.65,222.01 1785.65,221.59 1795.65,220.59 1805.65,219.6 1815.65,219.17 1825.65,218.6" fill="none" stroke="#00ff00" stroke-width="1.15" stroke-linejoin="round" shape-rendering="geometricPrecision"/>
<polyline points="35.65,244.37 45.65,245.22 55.65,246.64 65.65,247.49 75.65,248.06 85.65,249.48 95.65,250.05 105.65,249.11 115.65,248.46 125.65,248.09 135.65,247.72 145.65,248.55 155.65,248.8 165.65,249.06 175.65,248.46 185.65,246.73 195.65,244.42 205.65,242.4 215.65,241.52 225.65,240.07 235.65,238.65 245.65,238.37 255.65,236.38 265.65,235.81 275.65,235.24 285.65,233.82 295.65,234.1 305.65,232.96 315.65,231.54 325.65,230.69 335.65,229.83 345.65,228.13 355.65,227.27 365.65,226.42 375.65,226.14 385.65,227.27 395.65,229.55 405.65,231.82 415.65,232.39 425.65,232.68 435.65,232.96 445.65,232.96 455.65,234.1 465.65,234.1 475.65,233.25 485.65,233.53 495.65,232.96 505.65,233.25 515.65,233.82 525.65,232.96 535.65,232.68 545.65,234.1 555.65,235.24 565.65,234.95 575.65,234.67 585.65,233.82 595.65,232.68 605.65,232.96 615.65,232.11 625.65,235.24 635.65,237.8 645.65,240.64 655.65,243.2 665.65,245.48 675.65,247.75 685.65,248.6 695.65,250.88 705.65,252.87 715.65,254.86 725.65,258.27 735.65,261.12 745.65,261.97 755.65,263.39 765.65,267.09 775.65,270.78 785.65,275.33 795.65,280.17 805.65,283.3 815.65,288.13 825.65,288.98 835.65,289.27 845.65,289.27 855.65,290.12 865.65,292.4 875.65,296.95 885.65,302.35 895.65,307.47 905.65,313.44 915.65,319.98 925.65,325.67 935.65,330.5 945.65,336.76 955.65,341.59 965.65,345.57 975.65,348.42 985.65,349.56 995.65,350.41 1005.65,351.26 1015.65,351.26 1025.65,351.83 1035.65,353.54 1045.65,354.11 1055.65,354.39 1065.65,353.82 1075.65,352.12 1085.65,349.27 1095.65,345.01 1105.65,341.31 1115.65,336.76 1125.65,331.93 1135.65,327.09 1145.65,321.69 1155.65,316.57 1165.65,310.03 1175.65,305.48 1185.65,302.63 1195.65,299.79 1205.65,296.38 1215.65,293.82 1225.65,291.26 1235.65,288.13 1245.65,285.57 1255.65,283.01 1265.65,279.88 1275.65,276.76 1285.65,274.2 1295.65,271.64 1305.65,267.94 1315.65,264.24 1325.65,261.4 1335.65,259.41 1345.65,255.71 1355.65,252.58 1365.65,252.02 1375.65,250.88 1385.65,248.32 1395.65,246.61 1405.65,245.76 1415.65,244.34 1425.65,243.48 1435.65,242.06 1445.65,240.36 1455.65,239.22 1465.65,238.37 1475.65,236.38 1485.65,234.1 1495.65,232.11 1505.65,229.83 1515.65,226.71 1525.65,224.72 1535.65,223.29 1545.65,223.58 1555.65,224.43 1565.65,223.86 1575.65,223.29 1585.65,222.73 1595.65,221.3 1605.65,219.6 1615.65,219.31 1625.65,218.74 1635.65,218.46 1645.65,219.6 1655.65,219.88 1665.65,218.74 1675.65,219.31 1685.65,220.17 1695.65,220.73 1705.65,222.44 1715.65,225 1725.65,225.28 1735.65,224.43 1745.65,223.86 1755.65,222.73 1765.65,221.87 1775.65,220.73 1785.65,220.45 1795.65,219.88 1805.65,219.6 1815.65,219.03 1825.65,218.46" fill="none" stroke="#ff00ff" stroke-width="1.15" stroke-linejoin="round" shape-rendering="geometricPrecision"/>
<polyline points="35.65,243.71 45.65,244.22 55.65,245.87 65.65,246.39 75.65,246.33 85.65,247.98 95.65,247.92 105.65,248.43 115.65,249.51 125.65,251.16 135.65,251.73 145.65,252.87 155.65,251.73 165.65,251.73 175.65,250.59 185.65,245.48 195.65,240.93 205.65,236.38 215.65,233.53 225.65,228.98 235.65,225.57 245.65,223.86 255.65,221.02 265.65,219.88 275.65,219.88 285.65,222.16 295.65,227.27 305.65,229.55 315.65,229.55 325.65,232.39 335.65,234.1 345.65,232.39 355.65,233.53 365.65,232.96 375.65,232.39 385.65,232.39 395.65,231.82 405.65,234.1 415.65,235.24 425.65,232.96 435.65,231.82 445.65,233.53 455.65,234.67 465.65,235.24 475.65,234.1 485.65,234.67 495.65,234.1 505.65,232.39 515.65,232.39 525.65,232.96 535.65,233.53 545.65,234.67 555.65,235.81 565.65,234.67 575.65,235.24 585.65,232.96 595.65,231.26 605.65,233.53 615.65,231.82 625.65,237.51 635.65,242.06 645.65,246.61 655.65,250.59 665.65,256.28 675.65,260.26 685.65,264.24 695.65,270.5 705.65,272.21 715.65,277.89 725.65,279.03 735.65,280.17 745.65,277.32 755.65,276.19 765.65,277.89 775.65,281.31 785.65,286.43 795.65,289.84 805.65,294.39 815.65,298.37 825.65,298.94 835.65,298.37 845.65,301.21 855.65,304.06 865.65,306.9 875.65,312.59 885.65,318.27 895.65,325.1 905.65,332.49 915.65,341.59 925.65,352.4 935.65,362.64 945.65,372.31 955.65,379.13 965.65,384.25 975.65,384.25 985.65,380.84 995.65,375.72 1005.65,370.03 1015.65,360.93 1025.65,351.26 1035.65,344.44 1045.65,335.91 1055.65,329.65 1065.65,323.39 1075.65,319.98 1085.65,317.71 1095.65,314.29 1105.65,312.59 1115.65,312.59 1125.65,312.59 1135.65,309.74 1145.65,307.47 1155.65,303.49 1165.65,296.66 1175.65,290.98 1185.65,287.56 1195.65,285.29 1205.65,280.17 1215.65,275.05 1225.65,269.93 1235.65,266.52 1245.65,263.68 1255.65,262.54 1265.65,263.11 1275.65,262.54 1285.65,260.83 1295.65,257.99 1305.65,255.71 1315.65,253.44 1325.65,252.87 1335.65,252.3 1345.65,247.75 1355.65,242.63 1365.65,240.93 1375.65,239.22 1385.65,235.81 1395.65,235.24 1405.65,235.81 1415.65,235.24 1425.65,234.1 1435.65,231.82 1445.65,232.96 1455.65,235.81 1465.65,235.81 1475.65,233.53 1485.65,232.39 1495.65,228.98 1505.65,223.86 1515.65,218.18 1525.65,215.33 1535.65,214.76 1545.65,214.19 1555.65,213.06 1565.65,211.92 1575.65,213.06 1585.65,213.06 1595.65,213.62 1605.65,215.33 1615.65,220.45 1625.65,222.16 1635.65,222.16 1645.65,225 1655.65,226.71 1665.65,225.57 1675.65,225.57 1685.65,227.27 1695.65,227.84 1705.65,229.55 1715.65,229.55 1725.65,228.41 1735.65,226.71 1745.65,222.73 1755.65,218.74 1765.65,218.18 1775.65,215.9 1785.65,213.62 1795.65,211.92 1805.65,209.64 1815.65,208.51 1825.65,208.51" fill="none" stroke="#00e0e0" stroke-width="1.15" stroke-linejoin="round" shape-rendering="geometricPrecision"/>
<polyline points="35.65,244.79 45.65,245.82 55.65,249.11 65.65,250.14 75.65,250.02 85.65,251.16 95.65,250.02 105.65,247.75 115.65,248.89 125.65,252.3 135.65,252.3 145.65,255.71 155.65,255.71 165.65,254.57 175.65,248.89 185.65,238.65 195.65,226.14 205.65,217.04 215.65,212.49 225.65,209.07 235.65,212.49 245.65,221.59 255.65,225 265.65,227.27 275.65,230.69 285.65,231.82 295.65,232.96 305.65,234.1 315.65,231.82 325.65,234.1 335.65,236.38 345.65,231.82 355.65,232.96 365.65,234.1 375.65,230.69 385.65,228.41 395.65,231.82 405.65,235.24 415.65,236.38 425.65,235.24 435.65,235.24 445.65,235.24 455.65,234.1 465.65,234.1 475.65,232.96 485.65,234.1 495.65,232.96 505.65,230.69 515.65,230.69 525.65,232.96 535.65,232.96 545.65,236.38 555.65,240.93 565.65,238.65 575.65,237.51 585.65,232.96 595.65,226.14 605.65,226.14 615.65,225 625.65,237.51 635.65,251.16 645.65,267.09 655.65,275.05 665.65,287.56 675.65,283.01 685.65,277.32 695.65,273.91 705.65,269.36 715.65,268.23 725.65,275.05 735.65,283.01 745.65,280.74 755.65,283.01 765.65,287.56 775.65,287.56 785.65,289.84 795.65,298.94 805.65,305.76 815.65,309.18 825.65,310.31 835.65,306.9 845.65,303.49 855.65,302.35 865.65,304.62 875.65,314.86 885.65,329.65 895.65,346.71 905.65,362.64 915.65,378.56 925.65,389.94 935.65,395.62 945.65,397.9 955.65,395.62 965.65,389.94 975.65,378.56 985.65,366.05 995.65,353.54 1005.65,344.44 1015.65,331.93 1025.65,323.96 1035.65,322.82 1045.65,318.27 1055.65,314.86 1065.65,314.86 1075.65,316 1085.65,312.59 1095.65,310.31 1105.65,310.31 1115.65,310.31 1125.65,309.18 1135.65,306.9 1145.65,304.62 1155.65,296.66 1165.65,283.01 1175.65,272.77 1185.65,268.23 1195.65,265.95 1205.65,263.68 1215.65,267.09 1225.65,267.09 1235.65,264.81 1245.65,261.4 1255.65,261.4 1265.65,259.12 1275.65,257.99 1285.65,256.85 1295.65,254.57 1305.65,250.02 1315.65,247.75 1325.65,247.75 1335.65,247.75 1345.65,240.93 1355.65,235.24 1365.65,234.1 1375.65,230.69 1385.65,223.86 1395.65,229.55 1405.65,236.38 1415.65,236.38 1425.65,237.51 1435.65,239.79 1445.65,236.38 1455.65,235.24 1465.65,235.24 1475.65,229.55 1485.65,225 1495.65,221.59 1505.65,212.49 1515.65,201.11 1525.65,201.11 1535.65,204.52 1545.65,206.8 1555.65,213.62 1565.65,222.73 1575.65,225 1585.65,221.59 1595.65,220.45 1605.65,217.04 1615.65,218.18 1625.65,219.31 1635.65,222.73 1645.65,229.55 1655.65,236.38 1665.65,232.96 1675.65,231.82 1685.65,231.82 1695.65,226.14 1705.65,222.73 1715.65,226.14 1725.65,225 1735.65,221.59 1745.65,219.31 1755.65,214.76 1765.65,210.21 1775.65,206.8 1785.65,205.66 1795.65,204.52 1805.65,204.52 1815.65,206.8 1825.65,210.21" fill="none" stroke="#ffff00" stroke-width="1.15" stroke-linejoin="round" shape-rendering="geometricPrecision"/>
<line x1="30" x2="1856" y1="577" y2="577" stroke="#6ba6c0" stroke-width="1.7"/>
<line x1="35.65" x2="35.65" y1="577" y2="580.91" stroke="#87ceeb" stroke-width="1.3"/>
<line x1="45.65" x2="45.65" y1="577" y2="580.11" stroke="#87ceeb" stroke-width="1.3"/>
<line x1="55.65" x2="55.65" y1="577" y2="582.98" stroke="#87ceeb" stroke-width="1.3"/>
<line x1="65.65" x2="65.65" y1="577" y2="580.85" stroke="#87ceeb" stroke-width="1.3"/>
<line x1="85.65" x2="85.65" y1="577" y2="580.62" stroke="#87ceeb" stroke-width="1.3"/>
<line x1="115.65" x2="115.65" y1="577" y2="577.81" stroke="#87ceeb" stroke-width="1.3"/>
<line x1="125.65" x2="125.65" y1="577" y2="580.36" stroke="#87ceeb" stroke-width="1.3"/>
<line x1="135.65" x2="135.65" y1="577" y2="581.71" stroke="#87ceeb" stroke-width="1.3"/>
<line x1="145.65" x2="145.65" y1="577" y2="582.22" stroke="#87ceeb" stroke-width="1.3"/>
<line x1="155.65" x2="155.65" y1="577" y2="578.59" stroke="#87ceeb" stroke-width="1.3"/>
<line x1="165.65" x2="165.65" y1="577" y2="576.14" stroke="#ff0000" stroke-width="1.3"/>
<line x1="175.65" x2="175.65" y1="577" y2="569.18" stroke="#ff0000" stroke-width="1.3"/>
<line x1="185.65" x2="185.65" y1="577" y2="558" stroke="#ff0000" stroke-width="1.3"/>
<line x1="195.65" x2="195.65" y1="577" y2="548.37" stroke="#ff0000" stroke-width="1.3"/>
<line x1="205.65" x2="205.65" y1="577" y2="545.65" stroke="#ff0000" stroke-width="1.3"/>
<line x1="215.65" x2="215.65" y1="577" y2="552.84" stroke="#ff0000" stroke-width="1.3"/>
<line x1="225.65" x2="225.65" y1="577" y2="555.18" stroke="#ff0000" stroke-width="1.3"/>
<line x1="235.65" x2="235.65" y1="577" y2="561.58" stroke="#ff0000" stroke-width="1.3"/>
<line x1="245.65" x2="245.65" y1="577" y2="571.99" stroke="#ff0000" stroke-width="1.3"/>
<line x1="255.65" x2="255.65" y1="577" y2="571.88" stroke="#ff0000" stroke-width="1.3"/>
<line x1="265.65" x2="265.65" y1="577" y2="577.7" stroke="#87ceeb" stroke-width="1.3"/>
<line x1="275.65" x2="275.65" y1="577" y2="579.78" stroke="#87ceeb" stroke-width="1.3"/>
<line x1="285.65" x2="285.65" y1="577" y2="581.19" stroke="#87ceeb" stroke-width="1.3"/>
<line x1="295.65" x2="295.65" y1="577" y2="587.46" stroke="#87ceeb" stroke-width="1.3"/>
<line x1="305.65" x2="305.65" y1="577" y2="583.92" stroke="#87ceeb" stroke-width="1.3"/>
<line x1="315.65" x2="315.65" y1="577" y2="581.53" stroke="#87ceeb" stroke-width="1.3"/>
<line x1="325.65" x2="325.65" y1="577" y2="585.36" stroke="#87ceeb" stroke-width="1.3"/>
<line x1="335.65" x2="335.65" y1="577" y2="587.49" stroke="#87ceeb" stroke-width="1.3"/>
<line x1="345.65" x2="345.65" y1="577" y2="583.06" stroke="#87ceeb" stroke-width="1.3"/>
<line x1="355.65" x2="355.65" y1="577" y2="581.89" stroke="#87ceeb" stroke-width="1.3"/>
<line x1="365.65" x2="365.65" y1="577" y2="581.03" stroke="#87ceeb" stroke-width="1.3"/>
<line x1="375.65" x2="375.65" y1="577" y2="578.61" stroke="#87ceeb" stroke-width="1.3"/>
<line x1="385.65" x2="385.65" y1="577" y2="578.9" stroke="#87ceeb" stroke-width="1.3"/>
<line x1="395.65" x2="395.65" y1="577" y2="582.67" stroke="#87ceeb" stroke-width="1.3"/>
<line x1="405.65" x2="405.65" y1="577" y2="586.62" stroke="#87ceeb" stroke-width="1.3"/>
<line x1="415.65" x2="415.65" y1="577" y2="585.08" stroke="#87ceeb" stroke-width="1.3"/>
<line x1="425.65" x2="425.65" y1="577" y2="578.39" stroke="#87ceeb" stroke-width="1.3"/>
<line x1="435.65" x2="435.65" y1="577" y2="577.75" stroke="#87ceeb" stroke-width="1.3"/>
<line x1="445.65" x2="445.65" y1="577" y2="580.93" stroke="#87ceeb" stroke-width="1.3"/>
<line x1="455.65" x2="455.65" y1="577" y2="582.76" stroke="#87ceeb" stroke-width="1.3"/>
<line x1="465.65" x2="465.65" y1="577" y2="581.85" stroke="#87ceeb" stroke-width="1.3"/>
<line x1="475.65" x2="475.65" y1="577" y2="573.89" stroke="#ff0000" stroke-width="1.3"/>
<line x1="485.65" x2="485.65" y1="577" y2="576.24" stroke="#ff0000" stroke-width="1.3"/>
<line x1="495.65" x2="495.65" y1="577" y2="577.77" stroke="#87ceeb" stroke-width="1.3"/>
<line x1="515.65" x2="515.65" y1="577" y2="578.22" stroke="#87ceeb" stroke-width="1.3"/>
<line x1="525.65" x2="525.65" y1="577" y2="575.41" stroke="#ff0000" stroke-width="1.3"/>
<line x1="545.65" x2="545.65" y1="577" y2="583.9" stroke="#87ceeb" stroke-width="1.3"/>
<line x1="555.65" x2="555.65" y1="577" y2="587.66" stroke="#87ceeb" stroke-width="1.3"/>
<line x1="565.65" x2="565.65" y1="577" y2="580.51" stroke="#87ceeb" stroke-width="1.3"/>
<line x1="575.65" x2="575.65" y1="577" y2="574.04" stroke="#ff0000" stroke-width="1.3"/>
<line x1="585.65" x2="585.65" y1="577" y2="568.33" stroke="#ff0000" stroke-width="1.3"/>
<line x1="595.65" x2="595.65" y1="577" y2="566.99" stroke="#ff0000" stroke-width="1.3"/>
<line x1="615.65" x2="615.65" y1="577" y2="573.25" stroke="#ff0000" stroke-width="1.3"/>
<line x1="625.65" x2="625.65" y1="577" y2="590.52" stroke="#87ceeb" stroke-width="1.3"/>
<line x1="635.65" x2="635.65" y1="577" y2="600.63" stroke="#87ceeb" stroke-width="1.3"/>
<line x1="645.65" x2="645.65" y1="577" y2="611.04" stroke="#87ceeb" stroke-width="1.3"/>
<line x1="655.65" x2="655.65" y1="577" y2="613.86" stroke="#87ceeb" stroke-width="1.3"/>
<line x1="665.65" x2="665.65" y1="577" y2="609.91" stroke="#87ceeb" stroke-width="1.3"/>
<line x1="675.65" x2="675.65" y1="577" y2="598.28" stroke="#87ceeb" stroke-width="1.3"/>
<line x1="685.65" x2="685.65" y1="577" y2="587.74" stroke="#87ceeb" stroke-width="1.3"/>
<line x1="695.65" x2="695.65" y1="577" y2="589.15" stroke="#87ceeb" stroke-width="1.3"/>
<line x1="705.65" x2="705.65" y1="577" y2="585.43" stroke="#87ceeb" stroke-width="1.3"/>
<line x1="715.65" x2="715.65" y1="577" y2="584.04" stroke="#87ceeb" stroke-width="1.3"/>
<line x1="725.65" x2="725.65" y1="577" y2="587.73" stroke="#87ceeb" stroke-width="1.3"/>
<line x1="735.65" x2="735.65" y1="577" y2="589.04" stroke="#87ceeb" stroke-width="1.3"/>
<line x1="745.65" x2="745.65" y1="577" y2="581.6" stroke="#87ceeb" stroke-width="1.3"/>
<line x1="755.65" x2="755.65" y1="577" y2="579.78" stroke="#87ceeb" stroke-width="1.3"/>
<line x1="765.65" x2="765.65" y1="577" y2="583.36" stroke="#87ceeb" stroke-width="1.3"/>
<line x1="775.65" x2="775.65" y1="577" y2="582.98" stroke="#87ceeb" stroke-width="1.3"/>
<line x1="785.65" x2="785.65" y1="577" y2="585.48" stroke="#87ceeb" stroke-width="1.3"/>
<line x1="795.65" x2="795.65" y1="577" y2="589.64" stroke="#87ceeb" stroke-width="1.3"/>
<line x1="805.65" x2="805.65" y1="577" y2="591.01" stroke="#87ceeb" stroke-width="1.3"/>
<line x1="815.65" x2="815.65" y1="577" y2="590.53" stroke="#87ceeb" stroke-width="1.3"/>
<line x1="825.65" x2="825.65" y1="577" y2="583.53" stroke="#87ceeb" stroke-width="1.3"/>
<line x1="835.65" x2="835.65" y1="577" y2="574.58" stroke="#ff0000" stroke-width="1.3"/>
<line x1="845.65" x2="845.65" y1="577" y2="572.03" stroke="#ff0000" stroke-width="1.3"/>
<line x1="855.65" x2="855.65" y1="577" y2="573.63" stroke="#ff0000" stroke-width="1.3"/>
<line x1="865.65" x2="865.65" y1="577" y2="579.55" stroke="#87ceeb" stroke-width="1.3"/>
<line x1="875.65" x2="875.65" y1="577" y2="589.65" stroke="#87ceeb" stroke-width="1.3"/>
<line x1="885.65" x2="885.65" y1="577" y2="598.23" stroke="#87ceeb" stroke-width="1.3"/>
<line x1="895.65" x2="895.65" y1="577" y2="608.94" stroke="#87ceeb" stroke-width="1.3"/>
<line x1="905.65" x2="905.65" y1="577" y2="614.98" stroke="#87ceeb" stroke-width="1.3"/>
<line x1="915.65" x2="915.65" y1="577" y2="621.28" stroke="#87ceeb" stroke-width="1.3"/>
<line x1="925.65" x2="925.65" y1="577" y2="621.94" stroke="#87ceeb" stroke-width="1.3"/>
<line x1="935.65" x2="935.65" y1="577" y2="613.56" stroke="#87ceeb" stroke-width="1.3"/>
<line x1="945.65" x2="945.65" y1="577" y2="607.03" stroke="#87ceeb" stroke-width="1.3"/>
<line x1="955.65" x2="955.65" y1="577" y2="594.79" stroke="#87ceeb" stroke-width="1.3"/>
<line x1="965.65" x2="965.65" y1="577" y2="584.92" stroke="#87ceeb" stroke-width="1.3"/>
<line x1="975.65" x2="975.65" y1="577" y2="568.1" stroke="#ff0000" stroke-width="1.3"/>
<line x1="985.65" x2="985.65" y1="577" y2="549.62" stroke="#ff0000" stroke-width="1.3"/>
<line x1="995.65" x2="995.65" y1="577" y2="540.07" stroke="#ff0000" stroke-width="1.3"/>
<line x1="1005.65" x2="1005.65" y1="577" y2="534.9" stroke="#ff0000" stroke-width="1.3"/>
<line x1="1015.65" x2="1015.65" y1="577" y2="527.49" stroke="#ff0000" stroke-width="1.3"/>
<line x1="1025.65" x2="1025.65" y1="577" y2="522.76" stroke="#ff0000" stroke-width="1.3"/>
<line x1="1035.65" x2="1035.65" y1="577" y2="525.42" stroke="#ff0000" stroke-width="1.3"/>
<line x1="1045.65" x2="1045.65" y1="577" y2="525.57" stroke="#ff0000" stroke-width="1.3"/>
<line x1="1055.65" x2="1055.65" y1="577" y2="529.59" stroke="#ff0000" stroke-width="1.3"/>
<line x1="1065.65" x2="1065.65" y1="577" y2="534.16" stroke="#ff0000" stroke-width="1.3"/>
<line x1="1075.65" x2="1075.65" y1="577" y2="538.94" stroke="#ff0000" stroke-width="1.3"/>
<line x1="1085.65" x2="1085.65" y1="577" y2="540.1" stroke="#ff0000" stroke-width="1.3"/>
<line x1="1095.65" x2="1095.65" y1="577" y2="540.8" stroke="#ff0000" stroke-width="1.3"/>
<line x1="1105.65" x2="1105.65" y1="577" y2="548.42" stroke="#ff0000" stroke-width="1.3"/>
<line x1="1115.65" x2="1115.65" y1="577" y2="554.67" stroke="#ff0000" stroke-width="1.3"/>
<line x1="1125.65" x2="1125.65" y1="577" y2="558" stroke="#ff0000" stroke-width="1.3"/>
<line x1="1135.65" x2="1135.65" y1="577" y2="555.8" stroke="#ff0000" stroke-width="1.3"/>
<line x1="1145.65" x2="1145.65" y1="577" y2="553.87" stroke="#ff0000" stroke-width="1.3"/>
<line x1="1155.65" x2="1155.65" y1="577" y2="550.47" stroke="#ff0000" stroke-width="1.3"/>
<line x1="1165.65" x2="1165.65" y1="577" y2="541.03" stroke="#ff0000" stroke-width="1.3"/>
<line x1="1175.65" x2="1175.65" y1="577" y2="540.89" stroke="#ff0000" stroke-width="1.3"/>
<line x1="1185.65" x2="1185.65" y1="577" y2="546.67" stroke="#ff0000" stroke-width="1.3"/>
<line x1="1195.65" x2="1195.65" y1="577" y2="554.14" stroke="#ff0000" stroke-width="1.3"/>
<line x1="1205.65" x2="1205.65" y1="577" y2="556.96" stroke="#ff0000" stroke-width="1.3"/>
<line x1="1215.65" x2="1215.65" y1="577" y2="560.35" stroke="#ff0000" stroke-width="1.3"/>
<line x1="1225.65" x2="1225.65" y1="577" y2="562.16" stroke="#ff0000" stroke-width="1.3"/>
<line x1="1235.65" x2="1235.65" y1="577" y2="564.72" stroke="#ff0000" stroke-width="1.3"/>
<line x1="1245.65" x2="1245.65" y1="577" y2="567.63" stroke="#ff0000" stroke-width="1.3"/>
<line x1="1255.65" x2="1255.65" y1="577" y2="572.42" stroke="#ff0000" stroke-width="1.3"/>
<line x1="1265.65" x2="1265.65" y1="577" y2="572.78" stroke="#ff0000" stroke-width="1.3"/>
<line x1="1275.65" x2="1275.65" y1="577" y2="573.94" stroke="#ff0000" stroke-width="1.3"/>
<line x1="1285.65" x2="1285.65" y1="577" y2="575.54" stroke="#ff0000" stroke-width="1.3"/>
<line x1="1295.65" x2="1295.65" y1="577" y2="575.55" stroke="#ff0000" stroke-width="1.3"/>
<line x1="1305.65" x2="1305.65" y1="577" y2="574.57" stroke="#ff0000" stroke-width="1.3"/>
<line x1="1315.65" x2="1315.65" y1="577" y2="574.81" stroke="#ff0000" stroke-width="1.3"/>
<line x1="1325.65" x2="1325.65" y1="577" y2="579.38" stroke="#87ceeb" stroke-width="1.3"/>
<line x1="1335.65" x2="1335.65" y1="577" y2="582.84" stroke="#87ceeb" stroke-width="1.3"/>
<line x1="1345.65" x2="1345.65" y1="577" y2="572.91" stroke="#ff0000" stroke-width="1.3"/>
<line x1="1355.65" x2="1355.65" y1="577" y2="567.63" stroke="#ff0000" stroke-width="1.3"/>
<line x1="1365.65" x2="1365.65" y1="577" y2="572.7" stroke="#ff0000" stroke-width="1.3"/>
<line x1="1385.65" x2="1385.65" y1="577" y2="574.86" stroke="#ff0000" stroke-width="1.3"/>
<line x1="1395.65" x2="1395.65" y1="577" y2="581.63" stroke="#87ceeb" stroke-width="1.3"/>
<line x1="1405.65" x2="1405.65" y1="577" y2="588.16" stroke="#87ceeb" stroke-width="1.3"/>
<line x1="1415.65" x2="1415.65" y1="577" y2="588.82" stroke="#87ceeb" stroke-width="1.3"/>
<line x1="1425.65" x2="1425.65" y1="577" y2="591.1" stroke="#87ceeb" stroke-width="1.3"/>
<line x1="1435.65" x2="1435.65" y1="577" y2="588.88" stroke="#87ceeb" stroke-width="1.3"/>
<line x1="1445.65" x2="1445.65" y1="577" y2="585.71" stroke="#87ceeb" stroke-width="1.3"/>
<line x1="1455.65" x2="1455.65" y1="577" y2="589.25" stroke="#87ceeb" stroke-width="1.3"/>
<line x1="1465.65" x2="1465.65" y1="577" y2="589.62" stroke="#87ceeb" stroke-width="1.3"/>
<line x1="1475.65" x2="1475.65" y1="577" y2="582.61" stroke="#87ceeb" stroke-width="1.3"/>
<line x1="1495.65" x2="1495.65" y1="577" y2="573.53" stroke="#ff0000" stroke-width="1.3"/>
<line x1="1505.65" x2="1505.65" y1="577" y2="568.72" stroke="#ff0000" stroke-width="1.3"/>
<line x1="1515.65" x2="1515.65" y1="577" y2="561.35" stroke="#ff0000" stroke-width="1.3"/>
<line x1="1525.65" x2="1525.65" y1="577" y2="568.88" stroke="#ff0000" stroke-width="1.3"/>
<line x1="1535.65" x2="1535.65" y1="577" y2="578.23" stroke="#87ceeb" stroke-width="1.3"/>
<line x1="1545.65" x2="1545.65" y1="577" y2="582.87" stroke="#87ceeb" stroke-width="1.3"/>
<line x1="1555.65" x2="1555.65" y1="577" y2="589.65" stroke="#87ceeb" stroke-width="1.3"/>
<line x1="1565.65" x2="1565.65" y1="577" y2="592.04" stroke="#87ceeb" stroke-width="1.3"/>
<line x1="1575.65" x2="1575.65" y1="577" y2="593.3" stroke="#87ceeb" stroke-width="1.3"/>
<line x1="1585.65" x2="1585.65" y1="577" y2="588.38" stroke="#87ceeb" stroke-width="1.3"/>
<line x1="1595.65" x2="1595.65" y1="577" y2="586.98" stroke="#87ceeb" stroke-width="1.3"/>
<line x1="1605.65" x2="1605.65" y1="577" y2="586.04" stroke="#87ceeb" stroke-width="1.3"/>
<line x1="1615.65" x2="1615.65" y1="577" y2="590.78" stroke="#87ceeb" stroke-width="1.3"/>
<line x1="1625.65" x2="1625.65" y1="577" y2="593.44" stroke="#87ceeb" stroke-width="1.3"/>
<line x1="1635.65" x2="1635.65" y1="577" y2="592.83" stroke="#87ceeb" stroke-width="1.3"/>
<line x1="1645.65" x2="1645.65" y1="577" y2="599.11" stroke="#87ceeb" stroke-width="1.3"/>
<line x1="1655.65" x2="1655.65" y1="577" y2="602.17" stroke="#87ceeb" stroke-width="1.3"/>
<line x1="1665.65" x2="1665.65" y1="577" y2="592.28" stroke="#87ceeb" stroke-width="1.3"/>
<line x1="1675.65" x2="1675.65" y1="577" y2="589.05" stroke="#87ceeb" stroke-width="1.3"/>
<line x1="1685.65" x2="1685.65" y1="577" y2="586.56" stroke="#87ceeb" stroke-width="1.3"/>
<line x1="1695.65" x2="1695.65" y1="577" y2="582.86" stroke="#87ceeb" stroke-width="1.3"/>
<line x1="1705.65" x2="1705.65" y1="577" y2="583.94" stroke="#87ceeb" stroke-width="1.3"/>
<line x1="1715.65" x2="1715.65" y1="577" y2="584.37" stroke="#87ceeb" stroke-width="1.3"/>
<line x1="1725.65" x2="1725.65" y1="577" y2="580.78" stroke="#87ceeb" stroke-width="1.3"/>
<line x1="1735.65" x2="1735.65" y1="577" y2="574.85" stroke="#ff0000" stroke-width="1.3"/>
<line x1="1745.65" x2="1745.65" y1="577" y2="571.34" stroke="#ff0000" stroke-width="1.3"/>
<line x1="1755.65" x2="1755.65" y1="577" y2="569.55" stroke="#ff0000" stroke-width="1.3"/>
<line x1="1765.65" x2="1765.65" y1="577" y2="568.94" stroke="#ff0000" stroke-width="1.3"/>
<line x1="1775.65" x2="1775.65" y1="577" y2="567.34" stroke="#ff0000" stroke-width="1.3"/>
<line x1="1785.65" x2="1785.65" y1="577" y2="567.01" stroke="#ff0000" stroke-width="1.3"/>
<line x1="1795.65" x2="1795.65" y1="577" y2="567.52" stroke="#ff0000" stroke-width="1.3"/>
<line x1="1805.65" x2="1805.65" y1="577" y2="570.33" stroke="#ff0000" stroke-width="1.3"/>
<line x1="1815.65" x2="1815.65" y1="577" y2="576.25" stroke="#ff0000" stroke-width="1.3"/>
<line x1="1825.65" x2="1825.65" y1="577" y2="580.22" stroke="#87ceeb" stroke-width="1.3"/>
<polyline points="35.65,578.61 45.65,579 55.65,579.75 65.65,580.23 75.65,580.28 85.65,580.74 95.65,580.73 105.65,580.66 115.65,580.76 125.65,581.18 135.65,581.77 145.65,582.42 155.65,582.62 165.65,582.51 175.65,581.54 185.65,579.16 195.65,575.58 205.65,571.66 215.65,568.64 225.65,565.92 235.65,563.99 245.65,563.36 255.65,562.72 265.65,562.81 275.65,563.16 285.65,563.68 295.65,564.99 305.65,565.85 315.65,566.42 325.65,567.46 335.65,568.78 345.65,569.53 355.65,570.15 365.65,570.65 375.65,570.85 385.65,571.09 395.65,571.8 405.65,573 415.65,574.01 425.65,574.18 435.65,574.28 445.65,574.77 455.65,575.49 465.65,576.1 475.65,575.71 485.65,575.61 495.65,575.71 505.65,575.7 515.65,575.85 525.65,575.65 535.65,575.69 545.65,576.56 555.65,577.89 565.65,578.33 575.65,577.96 585.65,576.87 595.65,575.62 605.65,575.68 615.65,575.21 625.65,576.9 635.65,579.85 645.65,584.11 655.65,588.71 665.65,592.83 675.65,595.49 685.65,596.83 695.65,598.35 705.65,599.4 715.65,600.28 725.65,601.63 735.65,603.13 745.65,603.7 755.65,604.05 765.65,604.85 775.65,605.6 785.65,606.66 795.65,608.24 805.65,609.99 815.65,611.68 825.65,612.49 835.65,612.19 845.65,611.57 855.65,611.15 865.65,611.47 875.65,613.05 885.65,615.7 895.65,619.7 905.65,624.45 915.65,629.98 925.65,635.6 935.65,640.17 945.65,643.92 955.65,646.14 965.65,647.13 975.65,646.02 985.65,642.6 995.65,637.98 1005.65,632.72 1015.65,626.53 1025.65,619.75 1035.65,613.3 1045.65,606.88 1055.65,600.95 1065.65,595.59 1075.65,590.84 1085.65,586.22 1095.65,581.7 1105.65,578.13 1115.65,575.34 1125.65,572.96 1135.65,570.31 1145.65,567.42 1155.65,564.1 1165.65,559.61 1175.65,555.09 1185.65,551.3 1195.65,548.44 1205.65,545.94 1215.65,543.86 1225.65,542 1235.65,540.47 1245.65,539.29 1255.65,538.72 1265.65,538.19 1275.65,537.81 1285.65,537.63 1295.65,537.45 1305.65,537.15 1315.65,536.87 1325.65,537.17 1335.65,537.9 1345.65,537.39 1355.65,536.22 1365.65,535.68 1375.65,535.66 1385.65,535.39 1395.65,535.97 1405.65,537.37 1415.65,538.84 1425.65,540.61 1435.65,542.09 1445.65,543.18 1455.65,544.71 1465.65,546.29 1475.65,546.99 1485.65,546.95 1495.65,546.51 1505.65,545.48 1515.65,543.52 1525.65,542.51 1535.65,542.66 1545.65,543.4 1555.65,544.98 1565.65,546.86 1575.65,548.89 1585.65,550.32 1595.65,551.56 1605.65,552.69 1615.65,554.42 1625.65,556.47 1635.65,558.45 1645.65,561.21 1655.65,564.36 1665.65,566.27 1675.65,567.78 1685.65,568.97 1695.65,569.71 1705.65,570.57 1715.65,571.49 1725.65,571.97 1735.65,571.7 1745.65,570.99 1755.65,570.06 1765.65,569.05 1775.65,567.84 1785.65,566.6 1795.65,565.41 1805.65,564.58 1815.65,564.48 1825.65,564.89" fill="none" stroke="#00e0e0" stroke-width="1.15" stroke-linejoin="round" shape-rendering="geometricPrecision"/>
<polyline points="35.65,580.56 45.65,580.55 55.65,582.74 65.65,582.15 75.65,580.52 85.65,582.54 95.65,580.72 105.65,580.37 115.65,581.17 125.65,582.86 135.65,584.13 145.65,585.03 155.65,583.42 165.65,582.08 175.65,577.63 185.65,569.66 195.65,561.27 205.65,555.99 215.65,556.56 225.65,555.01 235.65,556.28 245.65,560.86 255.65,560.16 265.65,563.16 275.65,564.55 285.65,565.78 295.65,570.22 305.65,569.31 315.65,568.69 325.65,571.64 335.65,574.02 345.65,572.56 355.65,572.59 365.65,572.66 375.65,571.65 385.65,572.04 395.65,574.63 405.65,577.81 415.65,578.05 425.65,574.88 435.65,574.65 445.65,576.74 455.65,578.37 465.65,578.52 475.65,574.15 485.65,575.23 495.65,576.09 505.65,575.66 515.65,576.46 525.65,574.86 535.65,575.86 545.65,580 555.65,583.22 565.65,580.08 575.65,576.48 585.65,572.54 595.65,570.62 605.65,575.89 615.65,573.33 625.65,583.65 635.65,591.67 645.65,601.13 655.65,607.15 665.65,609.29 675.65,606.13 685.65,602.2 695.65,604.43 705.65,603.62 715.65,603.8 725.65,606.99 735.65,609.15 745.65,606 755.65,605.44 765.65,608.03 775.65,608.59 785.65,610.9 795.65,614.55 805.65,616.99 815.65,618.44 825.65,615.76 835.65,610.98 845.65,609.09 855.65,609.47 865.65,612.75 875.65,619.38 885.65,626.32 895.65,635.67 905.65,643.44 915.65,652.12 925.65,658.06 935.65,658.45 945.65,658.94 955.65,655.04 965.65,651.09 975.65,641.57 985.65,628.91 995.65,619.52 1005.65,611.67 1015.65,601.78 1025.65,592.63 1035.65,587.52 1045.65,581.16 1055.65,577.25 1065.65,574.18 1075.65,571.8 1085.65,567.77 1095.65,563.6 1105.65,563.84 1115.65,564.17 1125.65,563.46 1135.65,559.71 1145.65,555.85 1155.65,550.84 1165.65,541.62 1175.65,537.04 1185.65,536.13 1195.65,537.01 1205.65,535.92 1215.65,535.53 1225.65,534.58 1235.65,534.32 1245.65,534.61 1255.65,536.43 1265.65,536.09 1275.65,536.28 1285.65,536.9 1295.65,536.73 1305.65,535.93 1315.65,535.78 1325.65,538.36 1335.65,540.82 1345.65,535.34 1355.65,531.53 1365.65,533.53 1375.65,535.59 1385.65,534.32 1395.65,538.28 1405.65,542.95 1415.65,544.75 1425.65,547.65 1435.65,548.03 1445.65,547.53 1455.65,550.83 1465.65,552.6 1475.65,549.79 1485.65,546.79 1495.65,544.78 1505.65,541.34 1515.65,535.7 1525.65,538.45 1535.65,543.28 1545.65,546.33 1555.65,551.3 1565.65,554.38 1575.65,557.04 1585.65,556.01 1595.65,556.55 1605.65,557.21 1615.65,561.31 1625.65,564.69 1635.65,566.37 1645.65,572.27 1655.65,576.95 1665.65,573.91 1675.65,573.8 1685.65,573.75 1695.65,572.64 1705.65,574.04 1715.65,575.18 1725.65,573.86 1735.65,570.62 1745.65,568.16 1755.65,566.33 1765.65,565.02 1775.65,563.02 1785.65,561.6 1795.65,560.67 1805.65,561.24 1815.65,564.11 1825.65,566.5" fill="none" stroke="#ffff00" stroke-width="1.15" stroke-linejoin="round" shape-rendering="geometricPrecision"/>
</svg>
</div>
<!-- chart legend -->
<div class="abs lg lgd" style="left:33px;color:#fff">a2205</div>
<div class="abs lg lgm" style="left:81px;color:#ffff00">MA5</div>
<div class="abs lg lgd" style="left:117px;color:#ffff00">6055</div>
<div class="abs lg lgm" style="left:155px;color:#00ffff">MA20</div>
<div class="abs lg lgd" style="left:199px;color:#00ffff">6055</div>
<div class="abs lg lgm" style="left:238px;color:#ff00ff">MA30</div>
<div class="abs lg lgd" style="left:283px;color:#ff00ff">6053</div>
<div class="abs lg lgm" style="left:321px;color:#00ff00">MA40</div>
<div class="abs lg lgd" style="left:365px;color:#00ff00">6053</div>
<div class="abs lg lgc" style="left:404px;color:#fff">开</div>
<div class="abs lg lgd" style="left:429px;color:#fff">6053</div>
<div class="abs lg lgc" style="left:470px;color:#ff0000">高</div>
<div class="abs lg lgd" style="left:495px;color:#ff0000">6053</div>
<div class="abs lg lgc" style="left:535px;color:#ffa500">低</div>
<div class="abs lg lgd" style="left:560px;color:#ffa500">6053</div>
<div class="abs lg lgc" style="left:600px;color:#ffff00">收</div>
<div class="abs lg lgd" style="left:626px;color:#ffff00">6053</div>
<!-- macd legend -->
<div class="abs lg lgm" style="top:479.2px;left:32px;color:#fff">MACD</div>
<div class="abs lg lgm" style="top:479.2px;left:72px;color:#87ceeb">MACD</div>
<div class="abs lg lgm" style="top:479.2px;left:115px;color:#87ceeb">-0.23</div>
<div class="abs lg lgm" style="top:479.2px;left:163px;color:#ffff00">DIFF</div>
<div class="abs lg lgm" style="top:479.2px;left:208px;color:#ffff00">0.75</div>
<div class="abs lg lgm" style="top:479.2px;left:247px;color:#00ffff">DEA</div>
<div class="abs lg lgm" style="top:479.2px;left:283px;color:#00ffff">0.87</div>
<!-- price labels -->
<div class="abs pl" style="top:169px">6060</div>
<div class="abs pl" style="top:260px">6044</div>
<div class="abs pl" style="top:351px">6028</div>
<div class="abs pl" style="top:587px">-1.50</div>
<div class="abs pl" style="top:206.3px;font-size:19.4px;line-height:24px;color:#ffff00">6053</div>
<!-- time labels (generated positions) -->
<div class="abs tm" style="left:36px;top:454px;text-align:left">14:01</div>
<div class="abs tm" style="left:145px;top:454px">1203 14:18</div>
<div class="abs tm" style="left:315px;top:454px">1203 14:35</div>
<div class="abs tm" style="left:485px;top:454px">1203 14:52</div>
<div class="abs tm" style="left:655px;top:454px">1203 21:09</div>
<div class="abs tm" style="left:825px;top:454px">1203 21:26</div>
<div class="abs tm" style="left:995px;top:454px">1203 21:43</div>
<div class="abs tm" style="left:1165px;top:454px">1203 22:00</div>
<div class="abs tm" style="left:1335px;top:454px">1203 22:17</div>
<div class="abs tm" style="left:1505px;top:454px">1203 22:34</div>
<div class="abs tm" style="left:1675px;top:454px">1203 22:51</div>
<div class="abs tm" style="left:36px;top:674px;text-align:left">14:01</div>
<div class="abs tm" style="left:145px;top:674px">1203 14:18</div>
<div class="abs tm" style="left:315px;top:674px">1203 14:35</div>
<div class="abs tm" style="left:485px;top:674px">1203 14:52</div>
<div class="abs tm" style="left:655px;top:674px">1203 21:09</div>
<div class="abs tm" style="left:825px;top:674px">1203 21:26</div>
<div class="abs tm" style="left:995px;top:674px">1203 21:43</div>
<div class="abs tm" style="left:1165px;top:674px">1203 22:00</div>
<div class="abs tm" style="left:1335px;top:674px">1203 22:17</div>
<div class="abs tm" style="left:1505px;top:674px">1203 22:34</div>
<div class="abs tm" style="left:1675px;top:674px">1203 22:51</div>

<!-- bottom-left list -->
<div id="list" class="abs song">
  <div style="top:7.3px">持仓列表</div>
  <div style="top:37.3px">报单记录</div>
  <div style="top:67.5px">成交记录</div>
  <div style="top:97.7px">条件预埋</div>
  <div style="top:127.3px">市价下单</div>
  <div style="top:157.3px">交易设置</div>
</div>

<!-- order tab control -->
<div id="pane" class="abs"></div>
<div id="tabsel" class="abs"></div>
<div id="tabun" class="abs"></div>
<div class="abs lab song" style="left:130px;top:707.3px">限价</div>
<div class="abs lab song" style="left:191px;top:710.5px">市价</div>

<div class="abs lab song" style="left:141px;top:750px">合约:</div>
<div class="abs inp" style="left:189px;top:742px;width:204px;height:29px"></div>
<div class="abs" style="left:193px;top:744.5px;font-family:'Liberation Serif',serif;font-weight:bold;font-size:19.5px;line-height:22px;color:#ff0000">a2205</div>

<div class="abs lab song" style="left:141px;top:788px">买卖:</div>
<div class="abs gb" style="left:189px;top:782px;width:98px;height:30px"></div>
<div class="abs radio on" style="left:194px;top:790px"></div>
<div class="abs lab song" style="left:216px;top:790.6px">买</div>
<div class="abs radio" style="left:240px;top:790px"></div>
<div class="abs lab song" style="left:262px;top:790.6px">卖</div>
<div class="abs gb" style="left:293px;top:784px;width:98px;height:27px"></div>
<div class="abs radio on" style="left:299px;top:789px"></div>
<div class="abs lab song" style="left:321px;top:789.6px">开</div>
<div class="abs radio" style="left:344px;top:789px"></div>
<div class="abs lab song" style="left:366px;top:789.6px">平</div>

<div class="abs lab song" style="left:141px;top:831px">数量:</div>
<div class="abs inp" style="left:190px;top:824px;width:201px;height:30px;border:1.3px solid #a3a7b0"></div>
<div class="abs" style="left:190px;top:825.7px;width:180px;text-align:center;font-size:16px;line-height:20px">1</div>
<div class="abs spin up" style="left:371.6px;top:826px"><i></i></div>
<div class="abs spin dn" style="left:371.6px;top:838.4px"><i></i></div>

<div class="abs cj" style="left:362px;top:864.7px;font-size:15px;line-height:20px;font-weight:bold;color:#666;text-decoration:underline;text-underline-offset:2px">查价</div>

<div class="abs lab song" style="left:141px;top:900px">价格:</div>
<div class="abs inp" style="left:190px;top:893px;width:201px;height:30px;border:1.3px solid #a3a7b0"></div>
<div class="abs" style="left:190px;top:895px;width:180px;text-align:center;font-size:16px;line-height:20px">0</div>
<div class="abs spin up" style="left:371.6px;top:895px"><i></i></div>
<div class="abs spin dn" style="left:371.6px;top:907.4px"><i></i></div>

<div class="abs song" style="left:143px;top:949px;width:119px;height:36px;background:#ff8c00;border:1px solid #fde9d0;color:#fff;text-align:center;font-size:15px;line-height:38px">限价报单</div>
<div class="abs song" style="left:282.5px;top:949px;width:109px;height:36px;background:#98fb98;border:1.7px solid #111;color:#000;text-align:center;font-size:15px;line-height:36.5px">市价报单</div>

<!-- account summary -->
<div class="abs acct" style="left:431px"><b>MM</b><u>001</u></div>
<div class="abs acct" style="left:491.5px">动态权益<b>:</b><u>979952</u><b>.</b><u>25</u><b>,</b></div>
<div class="abs acct" style="left:678px">可用<b>:</b><u>975122</u><b>.</b><u>25</u><b>,</b></div>
<div class="abs acct" style="left:824px">动态盈亏<b>:</b><u>5795</u><b>,</b></div>
<div class="abs acct" style="left:960px">平仓盈亏<b>:</b><u>0</u><b>,</b></div>
<div class="abs acct" style="left:1064px">手续费<b>:</b><u>0</u></div>

<!-- right vertical tabs -->
<div id="vsel2" class="abs"></div>
<div class="abs vt2 cj" style="top:738.6px">持<br>仓</div>
<div class="abs vt2 cj" style="top:798.6px">报<br>单</div>
<div class="abs vt2 cj" style="top:858.6px">成<br>交</div>
<div class="abs vt2 cj" style="top:918.6px;color:#0000ff">条<br>件</div>

<!-- table -->
<div id="tsh-b" class="abs"></div>
<div id="tfr-in" class="abs"></div><div id="tfr-t" class="abs"></div><div id="rborder2" class="abs"></div>
<div id="table" class="abs">
  <div class="abs th song" style="left:0;width:38px"></div>
  <div class="abs th song" style="left:38px;width:182px">合约</div>
  <div class="abs th song" style="left:220px;width:99px">条件</div>
  <div class="abs th song" style="left:319px;width:204px">价格</div>
  <div class="abs th song" style="left:523px;width:102px">买卖</div>
  <div class="abs th song" style="left:625px;width:118px">手数</div>
  <div class="abs th song" style="left:743px;width:175px">状态</div>
  <div class="abs th song" style="left:918px;width:218px">策略</div>
  <div class="abs th song" style="left:1136px;width:185px;text-align:left;padding-left:6px">时间</div>
  <div class="abs th song" style="left:1321px;width:137px">删除</div>
</div>

<!-- status bar -->
<div id="status" class="abs"></div>
<div class="abs cj" style="left:5px;top:1007.6px;font-size:15px;line-height:20px;font-weight:bold;color:#222;letter-spacing:-.5px">隐藏</div>
<div class="abs cj" style="left:45px;top:1007.6px;font-size:15px;line-height:20px;font-weight:bold;color:#000;text-decoration:underline;text-underline-offset:2px;letter-spacing:-.5px">注销</div>
<div class="abs cj" style="left:97px;top:1007.6px;font-size:15.3px;line-height:20px;color:#2e8b3c;white-space:pre">账号登录成功<span style="letter-spacing:.35px">:MM001</span></div>
<div id="strip" class="abs"></div>
</body>
</html>
